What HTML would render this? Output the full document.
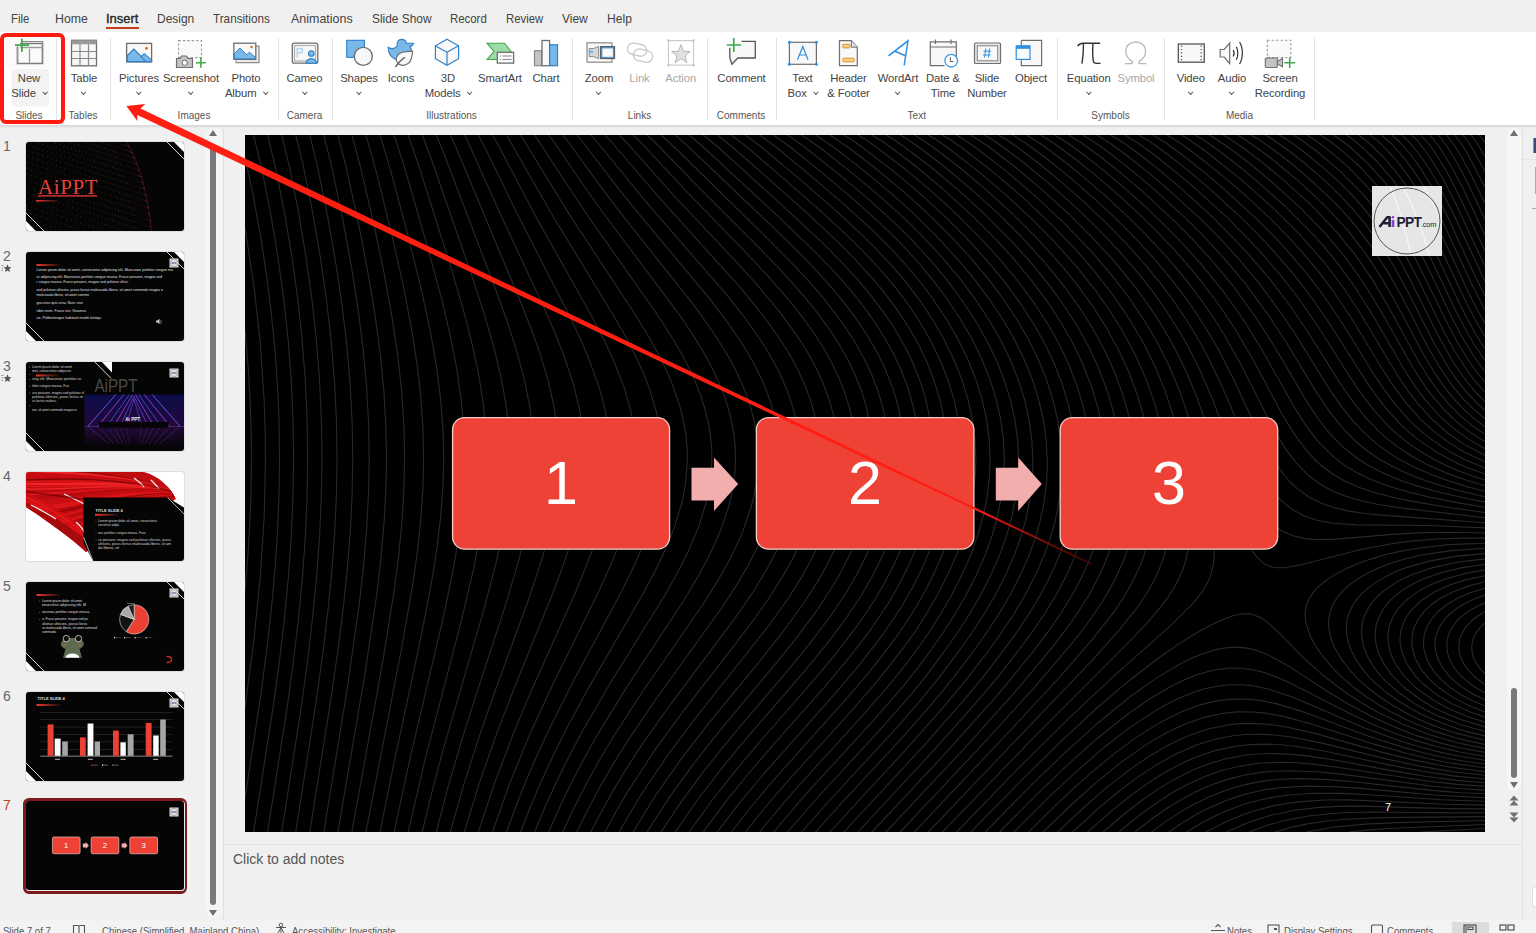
<!DOCTYPE html>
<html><head><meta charset="utf-8">
<style>
*{margin:0;padding:0;box-sizing:border-box}
html,body{width:1536px;height:933px;overflow:hidden;background:#f0f0f0;font-family:"Liberation Sans",sans-serif;color:#424242}
.a{position:absolute}
.tab{position:absolute;top:12px;transform-origin:0 0;font-size:12.6px;color:#424242;white-space:nowrap}
.lbl{position:absolute;font-size:11.3px;color:#444;text-align:center;white-space:nowrap;line-height:15px;transform:translateX(-50%);letter-spacing:-0.1px}
.grp{position:absolute;top:109px;font-size:10px;color:#555;white-space:nowrap;transform:translateX(-50%);line-height:13px}
.sep{position:absolute;top:38px;width:1px;height:82px;background:#e3e3e3}
.dis{color:#a8a8a8}
.chev{display:inline-block;width:3.6px;height:3.6px;border-right:1px solid #555;border-bottom:1px solid #555;transform:rotate(45deg);margin:0 0 4px 4px;vertical-align:middle}
.lbl .c0{margin-left:0}
.num{position:absolute;left:3px;font-size:14px;color:#666;line-height:14px}
.thumb{position:absolute;left:25px;width:159px;height:89px;background:#000;overflow:hidden;border-radius:3px}
</style></head>
<body>

<div class="a" style="left:0;top:0;width:1536px;height:32px;background:#f0f0f0"></div>
<div class="tab" style="left:11px;transform:scaleX(0.9)">File</div>
<div class="tab" style="left:55px;transform:scaleX(0.98)">Home</div>
<div class="tab" style="left:106px;color:#262626;-webkit-text-stroke:0.35px #262626;transform:scaleX(1.03)">Insert</div>
<div class="a" style="left:106px;top:27px;width:33px;height:2px;background:#c43e1c"></div>
<div class="tab" style="left:157px;transform:scaleX(0.95)">Design</div>
<div class="tab" style="left:213px;transform:scaleX(0.93)">Transitions</div>
<div class="tab" style="left:291px;transform:scaleX(0.99)">Animations</div>
<div class="tab" style="left:372px;transform:scaleX(0.945)">Slide Show</div>
<div class="tab" style="left:450px;transform:scaleX(0.905)">Record</div>
<div class="tab" style="left:506px;transform:scaleX(0.9)">Review</div>
<div class="tab" style="left:562px;transform:scaleX(0.95)">View</div>
<div class="tab" style="left:607px;transform:scaleX(0.965)">Help</div>
<div class="a" style="left:0;top:32px;width:1536px;height:93px;background:#fff"></div>
<div class="a" style="left:0;top:125px;width:1536px;height:3px;background:linear-gradient(#d4d4d4,#ececec)"></div>

<svg class="a" style="left:0;top:0" width="1536" height="130" viewBox="0 0 1536 130">
<g fill="none" stroke-linejoin="miter">
<!-- New Slide -->
<rect x="5" y="35" width="46" height="33" fill="#fbfbfb"/>
<rect x="11.5" y="69" width="37.5" height="37.5" rx="3" fill="#f3f3f3"/>
<path d="M20 43.5h22.5v20h-25v-17" stroke="#7a7a7a" stroke-width="1.6"/>
<path d="M17.5 47.5v16M20 47.5h22.5M29.5 49v14.5" stroke="#9a9a9a" stroke-width="1.3"/>
<path d="M22 42.5h20.5v21" stroke="#8a8a8a" stroke-width="1.2" transform="translate(0,-1)"/>
<path d="M15 45.2h14M21.9 38.5v13.5" stroke="#3fa84b" stroke-width="1.7"/>
<!-- Table -->
<rect x="71.5" y="40.3" width="25" height="25.5" fill="#f7f7f7" stroke="#6e6e6e" stroke-width="1.3"/>
<rect x="71.5" y="40.3" width="25" height="4" fill="#9a9a9a"/>
<path d="M71.5 51.5h25M71.5 58.5h25M80 44.3v21.5M88.5 44.3v21.5" stroke="#8a8a8a" stroke-width="1.2"/>
<!-- Pictures -->
<rect x="126.6" y="43.4" width="25" height="18.5" fill="#f8f8f8" stroke="#6e6e6e" stroke-width="1.3"/>
<path d="M127.3 55.5l6.5-6.5 7.5 7.5 3-2.8 7.3 6.5v1.4h-24.3z" fill="#7ab8e8" stroke="#2f7fc8" stroke-width="1.1"/>
<path d="M140.5 56.2l5 5" stroke="#2f7fc8" stroke-width="1.1"/>
<circle cx="146.5" cy="48.3" r="1.5" fill="#e8731a"/>
<!-- Screenshot -->
<rect x="178.5" y="40.6" width="23" height="17" fill="#fafafa" stroke="#9a9a9a" stroke-width="1.1" stroke-dasharray="2.4 2"/>
<path d="M176.5 58.5h3.5l1.5-2.5h5l1.5 2.5h4.5v9h-16z" fill="#c4c4c4" stroke="#6e6e6e" stroke-width="1.2"/>
<circle cx="184.7" cy="62.8" r="2.6" fill="#fff" stroke="#6e6e6e" stroke-width="1"/>
<path d="M196 62.7h9.8M200.9 57.6v10.2" stroke="#3fa84b" stroke-width="1.6"/>
<!-- Photo album -->
<path d="M236 60.5v2.2h23v-16.5h-2.8" stroke="#8a8a8a" stroke-width="1.2" fill="#eee"/>
<rect x="233.8" y="43.2" width="22" height="16.2" fill="#f8f8f8" stroke="#6e6e6e" stroke-width="1.3"/>
<path d="M234.4 53.5l5.5-5.5 6.8 6.8 2.7-2.6 6 5.3v1.3h-21z" fill="#7ab8e8" stroke="#2f7fc8" stroke-width="1"/>
<circle cx="251.5" cy="47" r="1.3" fill="#e8731a"/>
<!-- Cameo -->
<rect x="292.3" y="43.2" width="25.5" height="20" rx="2" fill="#f8f8f8" stroke="#6e6e6e" stroke-width="1.3"/>
<rect x="294.5" y="45.5" width="21" height="15.5" fill="none" stroke="#b0b0b0" stroke-width="1.2"/>
<path d="M297.2 57.5v-9h3a2.2 2.2 0 0 1 0 4.4h-3" stroke="#a9d0f2" stroke-width="1.3"/>
<circle cx="311.3" cy="53.5" r="2.8" fill="#7ab8e8" stroke="#2f7fc8" stroke-width="1.1"/>
<path d="M306 63.3a5.3 4.7 0 0 1 10.6 0z" fill="#7ab8e8" stroke="#2f7fc8" stroke-width="1.1"/>
<!-- Shapes -->
<rect x="346.7" y="40.3" width="17.7" height="17" fill="#7ab8e8" stroke="#2f7fc8" stroke-width="1.1"/>
<circle cx="363.3" cy="56.4" r="9" fill="#f8f8f8" stroke="#6e6e6e" stroke-width="1.3"/>
<!-- Icons (duck + leaf) -->
<path d="M388.2 47.2c3 2 6.5 1.5 9-1-1-4 1.3-6.8 4.5-6.8 2.5 0 4.2 1.8 4.7 3.8h7.3c-.5 1.7-2 3-3.7 3.4 1 1.6 1.5 3.3 1.3 5-.5 5-5 8-10.5 8.3-8 .3-12.5-5-12.6-12.7z" fill="#7ab8e8" stroke="#2f7fc8" stroke-width="1.1"/>
<path d="M395.5 66.8c2-3 4.5-6 8.5-9.2M398 63.5c-3-3-2.3-8 2-10.3 3.5-1.8 8-1.6 12.5-2-.2 5-1.2 9.5-4 12-2.5 2.5-7 3-10.5.3z" fill="#f8f8f8" stroke="#6e6e6e" stroke-width="1.2"/>
<path d="M395.5 66.8c2-3 4.5-6 9.5-9.5" stroke="#6e6e6e" stroke-width="1.2"/>
<!-- 3D models cube -->
<path d="M447 39.2l11.6 6.6v12.9l-11.6 6.6-11.6-6.6v-12.9z" fill="#f8f8f8" stroke="#2f7fc8" stroke-width="1.2"/>
<path d="M435.4 45.8l6.5 3.7M447 52.2l11.6-6.4M447 52.2v13" stroke="#2f7fc8" stroke-width="1.2"/>
<path d="M441.9 49.5l5.1 2.7" stroke="#2f7fc8" stroke-width="1.2" stroke-dasharray="0"/>
<!-- SmartArt -->
<path d="M487 43.2h17.5l7.5 9.5-7.5 6.8h-17.5l7-8z" fill="#9fdba6" stroke="#3fa84b" stroke-width="1.1"/>
<rect x="497.3" y="52.3" width="16.3" height="10.8" fill="#fafafa" stroke="#6e6e6e" stroke-width="1.3"/>
<path d="M500 56h1M502.5 56h9M500 59.5h1M502.5 59.5h9" stroke="#8a8a8a" stroke-width="1"/>
<!-- Chart -->
<rect x="534.5" y="50.7" width="7.3" height="15" fill="#c4c4c4" stroke="#8a8a8a" stroke-width="1.2"/>
<rect x="542" y="40.5" width="7.6" height="25.2" fill="#fafafa" stroke="#6e6e6e" stroke-width="1.3"/>
<rect x="549.7" y="44.8" width="7.8" height="20.9" fill="#7ab8e8" stroke="#2f7fc8" stroke-width="1.2"/>
<!-- Zoom -->
<rect x="587" y="42.8" width="25" height="19.4" fill="#f7f7f7" stroke="#8a8a8a" stroke-width="1.2"/>
<path d="M589.2 48.5h4.5l5-2.2h0v12.5l-5-2.2h-4.5z" fill="#d8d8d8" stroke="#8a8a8a" stroke-width="1"/>
<rect x="590" y="50.5" width="3" height="2.5" fill="#7ab8e8"/>
<rect x="600.6" y="46.6" width="14" height="12" fill="#555" stroke="#555" stroke-width="1"/>
<rect x="601.8" y="47.8" width="11.6" height="9.6" fill="#fafafa" stroke="#4a9be0" stroke-width="1.2"/>
<!-- Link (disabled) -->
<rect x="627.3" y="43.8" width="19.5" height="11.6" rx="5.8" stroke="#c8c8c8" stroke-width="1.3" transform="rotate(12 637 49.6)"/>
<rect x="633.3" y="49.9" width="19.5" height="11.6" rx="5.8" stroke="#c8c8c8" stroke-width="1.3" transform="rotate(12 643 55.7)"/>
<!-- Action (disabled) -->
<rect x="668.5" y="40.6" width="25" height="24.5" stroke="#c8c8c8" stroke-width="1.1"/>
<rect x="667.3" y="39.4" width="2.4" height="2.4" fill="#c8c8c8"/><rect x="692.3" y="39.4" width="2.4" height="2.4" fill="#c8c8c8"/>
<rect x="667.3" y="63.9" width="2.4" height="2.4" fill="#c8c8c8"/><rect x="692.3" y="63.9" width="2.4" height="2.4" fill="#c8c8c8"/>
<path d="M681 44.7l2.6 6.6 6.7.3-5.3 4.4 1.9 6.6-5.9-3.9-5.9 3.9 1.9-6.6-5.3-4.4 6.7-.3z" fill="#e0e0e0" stroke="#b8b8b8" stroke-width="1"/>
<!-- Comment -->
<path d="M741.5 41.3H755.3V58H737.8L731.9 64.2L729.8 58V47.8" fill="#f8f8f8" stroke="#555" stroke-width="1.3" stroke-linejoin="miter"/>
<path d="M726.8 45h14.2M733.8 38v14" stroke="#3fa84b" stroke-width="1.7"/>
<!-- Text box -->
<rect x="789.4" y="42.3" width="27" height="22" fill="#f8f8f8" stroke="#6e6e6e" stroke-width="1.2"/>
<circle cx="789.4" cy="42.3" r="1.5" fill="#2f8fe0"/><circle cx="816.4" cy="42.3" r="1.5" fill="#2f8fe0"/>
<circle cx="789.4" cy="64.3" r="1.5" fill="#2f8fe0"/><circle cx="816.4" cy="64.3" r="1.5" fill="#2f8fe0"/>
<path d="M797.5 59.8l5.3-13.3 5.2 13.3M799.4 55h7" stroke="#2f8fe0" stroke-width="1.2"/>
<!-- Header & Footer -->
<path d="M839.5 40.7h11.8l6 6.5v18.5h-17.8z" fill="#f8f8f8" stroke="#6e6e6e" stroke-width="1.2"/>
<path d="M851.3 40.7v6.5h6" fill="#e0e0e0" stroke="#6e6e6e" stroke-width="1"/>
<rect x="842.7" y="44.3" width="7.2" height="3.6" rx="1" fill="#f7d48a" stroke="#e8892a" stroke-width="1"/>
<rect x="842.7" y="58.2" width="11.5" height="3.6" rx="1" fill="#f7d48a" stroke="#e8892a" stroke-width="1"/>
<!-- WordArt -->
<path d="M888.5 55.8l19.5-15-3.8 24.5M895 51.2l10.5 4.6" stroke="#2f8fe0" stroke-width="1.5"/>
<!-- Date & Time -->
<path d="M944.5 65.6h-14.2v-23.8h26v18" fill="#f8f8f8" stroke="#6e6e6e" stroke-width="1.2"/>
<path d="M930.3 47h26M935.5 39.5v4.5M951 39.5v4.5" stroke="#6e6e6e" stroke-width="1.2"/>
<circle cx="951.2" cy="60.7" r="6.3" fill="#fff" stroke="#3a9ae0" stroke-width="1.3"/>
<path d="M950.3 57.2v4.3h3" stroke="#555" stroke-width="1"/>
<!-- Slide number -->
<rect x="974.5" y="43" width="26" height="20.5" rx="1" fill="#e8e8e8" stroke="#6e6e6e" stroke-width="1.2"/>
<rect x="977.3" y="45.8" width="20.4" height="15" fill="#f8f8f8" stroke="#8a8a8a" stroke-width="1.1"/>
<path d="M985.8 48.5l-1.2 9M989.6 48.5l-1.2 9M983.5 51.2h7.5M983 55h7.5" stroke="#2f8fe0" stroke-width="1"/>
<!-- Object -->
<path d="M1021.3 40.3h20.3v25.3h-20.3v-6" fill="#f8f8f8" stroke="#6e6e6e" stroke-width="1.2"/>
<path d="M1021.3 40.3v5.5" stroke="#6e6e6e" stroke-width="1.2"/>
<rect x="1016.2" y="45.8" width="13.8" height="13.6" fill="#fafafa" stroke="#2f8fe0" stroke-width="1.2"/>
<rect x="1016.2" y="45.8" width="13.8" height="3" fill="#2f8fe0"/>
<!-- Equation pi -->
<path d="M1077.5 46c1.5-2 3-2.8 5.5-2.8h17.2M1083.5 43.2c0 7-.5 14-1.5 20.5M1093 43.2c-.5 6-.5 13 .5 18.5.5 1.5 2.5 2 7 1.5" stroke="#333" stroke-width="1.4"/>
<!-- Symbol omega (disabled) -->
<path d="M1125 63.7h7.3v-2.3c-4.2-2.2-6.5-6-6.5-10.3 0-5.3 4.3-9.1 9.9-9.1s9.9 3.8 9.9 9.1c0 4.3-2.3 8.1-6.5 10.3v2.3h7.3" stroke="#b8b8b8" stroke-width="1.3"/>
<!-- Video -->
<rect x="1178.3" y="44" width="26" height="18.2" fill="#f8f8f8" stroke="#555" stroke-width="1.3"/>
<path d="M1181.5 45.5v16M1201.2 45.5v16" stroke="#555" stroke-width="1.3" stroke-dasharray="1.2 2.2"/>
<!-- Audio -->
<path d="M1220.2 49.5h4l5.5-6.5v20.5l-5.5-6.5h-4z" fill="#f8f8f8" stroke="#6e6e6e" stroke-width="1.2"/>
<path d="M1233.2 50c1.2 2 1.2 4.5 0 6.5M1236.3 46.8c2 3.5 2 9.5 0 13M1239.5 42c3.8 5.5 3.8 16.5 0 22" stroke="#333" stroke-width="1.2"/>
<!-- Screen recording -->
<rect x="1267.3" y="40.2" width="23.5" height="17.3" fill="#fafafa" stroke="#9a9a9a" stroke-width="1.1" stroke-dasharray="2.4 2"/>
<rect x="1265.3" y="58" width="12" height="9.5" rx="1" fill="#c4c4c4" stroke="#6e6e6e" stroke-width="1.1"/>
<path d="M1277.5 61.3l5-2.8v8.2l-5-2.8z" fill="#c4c4c4" stroke="#6e6e6e" stroke-width="1.1"/>
<path d="M1284.3 62.7h10.8M1289.7 57.5v10.5" stroke="#3fa84b" stroke-width="1.6"/>
</g>
</svg>

<div class="lbl" style="left:29px;top:71px">New<br>Slide <span class="chev"></span></div>
<div class="lbl" style="left:84px;top:71px">Table<br><span class="chev c0"></span></div>
<div class="lbl" style="left:139px;top:71px">Pictures<br><span class="chev c0"></span></div>
<div class="lbl" style="left:191px;top:71px">Screenshot<br><span class="chev c0"></span></div>
<div class="lbl" style="left:246px;top:71px">Photo<br>Album <span class="chev"></span></div>
<div class="lbl" style="left:304.5px;top:71px">Cameo<br><span class="chev c0"></span></div>
<div class="lbl" style="left:359px;top:71px">Shapes<br><span class="chev c0"></span></div>
<div class="lbl" style="left:401px;top:71px">Icons</div>
<div class="lbl" style="left:448px;top:71px">3D<br>Models <span class="chev"></span></div>
<div class="lbl" style="left:500px;top:71px">SmartArt</div>
<div class="lbl" style="left:546px;top:71px">Chart</div>
<div class="lbl" style="left:599px;top:71px">Zoom<br><span class="chev c0"></span></div>
<div class="lbl dis" style="left:639.5px;top:71px">Link</div>
<div class="lbl dis" style="left:680.75px;top:71px">Action</div>
<div class="lbl" style="left:741.5px;top:71px">Comment</div>
<div class="lbl" style="left:802.5px;top:71px">Text<br>Box <span class="chev"></span></div>
<div class="lbl" style="left:848.5px;top:71px">Header<br>&amp; Footer</div>
<div class="lbl" style="left:898px;top:71px">WordArt<br><span class="chev c0"></span></div>
<div class="lbl" style="left:943px;top:71px">Date &amp;<br>Time</div>
<div class="lbl" style="left:987px;top:71px">Slide<br>Number</div>
<div class="lbl" style="left:1031px;top:71px">Object</div>
<div class="lbl" style="left:1088.75px;top:71px">Equation<br><span class="chev c0"></span></div>
<div class="lbl dis" style="left:1136px;top:71px">Symbol</div>
<div class="lbl" style="left:1190.75px;top:71px">Video<br><span class="chev c0"></span></div>
<div class="lbl" style="left:1232px;top:71px">Audio<br><span class="chev c0"></span></div>
<div class="lbl" style="left:1280px;top:71px">Screen<br>Recording</div>
<div class="grp" style="left:29px">Slides</div>
<div class="grp" style="left:83px">Tables</div>
<div class="grp" style="left:194px">Images</div>
<div class="grp" style="left:304.5px">Camera</div>
<div class="grp" style="left:451.5px">Illustrations</div>
<div class="grp" style="left:639.5px">Links</div>
<div class="grp" style="left:741px">Comments</div>
<div class="grp" style="left:916.75px">Text</div>
<div class="grp" style="left:1110.5px">Symbols</div>
<div class="grp" style="left:1239.5px">Media</div>
<div class="sep" style="left:56px"></div>
<div class="sep" style="left:110px"></div>
<div class="sep" style="left:278px"></div>
<div class="sep" style="left:332px"></div>
<div class="sep" style="left:572px"></div>
<div class="sep" style="left:707px"></div>
<div class="sep" style="left:776px"></div>
<div class="sep" style="left:1057px"></div>
<div class="sep" style="left:1164px"></div>
<div class="sep" style="left:1314px"></div>
<!-- thumbnail pane scrollbar -->
<div class="a" style="left:205px;top:128px;width:18px;height:790px;background:#f5f5f5;border-radius:9px"></div>
<div class="a" style="left:223px;top:128px;width:1px;height:792px;background:#e0e0e0"></div>
<div class="a" style="left:210px;top:147px;width:6px;height:758px;background:#7a7a7a;border-radius:3px"></div>
<div class="a" style="left:209px;top:130px;width:0;height:0;border-left:4px solid transparent;border-right:4px solid transparent;border-bottom:6px solid #707070"></div>
<div class="a" style="left:209px;top:910px;width:0;height:0;border-left:4px solid transparent;border-right:4px solid transparent;border-top:6px solid #707070"></div>
<!-- slide numbers -->
<div class="num" style="top:139px">1</div>
<div class="num" style="top:249px">2</div>
<div class="num" style="top:359px">3</div>
<div class="num" style="top:469px">4</div>
<div class="num" style="top:579px">5</div>
<div class="num" style="top:689px">6</div>
<div class="num" style="top:798px;color:#c43e1c">7</div>
<!-- main slide -->
<div class="a" id="slide" style="left:245px;top:135px;width:1240px;height:697px;background:#000;overflow:hidden"></div>
<div class="a" style="left:245px;top:135px;width:1240px;height:697px;overflow:hidden">
<svg width="1240" height="697" viewBox="0 0 1240 697" style="position:absolute;left:0;top:0">
<g id="contours" fill="none" stroke="#282828" stroke-width="1.1"><path d="M0.0 456.1 2.9 420.6 4.8 388.6 6.0 356.5 6.4 324.5 6.1 292.4 4.9 260.4 2.9 228.3 0.0 194.7 M0.0 572.4 8.9 504.7 15.4 440.6 19.2 380.5 20.5 324.5 20.1 292.4 19.1 264.4 15.3 208.3 9.1 152.2 0.0 92.5 M0.0 663.2 16.3 556.8 22.0 512.7 26.5 472.7 30.1 432.6 32.5 396.6 34.0 360.5 34.5 324.5 34.1 288.4 32.6 252.4 30.1 216.3 26.1 176.3 21.5 140.2 15.4 100.1 8.1 60.1 0.0 21.6 M8.6 697.0 28.0 572.8 34.1 528.8 39.3 484.7 43.5 440.6 46.3 400.6 48.0 360.5 48.6 324.5 48.0 284.4 46.2 244.4 43.1 204.3 38.8 164.2 32.6 120.2 25.2 76.1 16.4 32.0 8.6 0.0 M22.6 697.0 42.1 572.8 48.1 528.8 53.4 484.7 57.6 440.6 60.4 400.6 62.1 360.5 62.6 324.5 62.1 284.4 60.2 244.4 57.1 204.3 52.8 164.2 46.7 120.2 39.2 76.1 30.4 32.0 22.6 0.0 M36.7 697.0 56.2 572.8 62.2 528.8 67.4 484.7 71.7 440.6 74.6 400.6 76.4 360.5 77.0 324.5 76.4 284.4 74.5 244.4 71.3 204.3 66.9 164.2 60.7 120.2 53.3 76.1 44.5 32.0 36.7 0.0 M50.7 697.0 70.8 568.8 77.5 520.7 82.8 476.7 86.8 436.6 89.7 396.6 91.4 360.5 92.0 324.5 91.4 284.4 89.6 248.4 86.4 208.3 81.9 168.2 75.6 124.2 67.4 76.1 57.7 28.0 50.7 0.0 M64.8 697.0 86.4 560.8 93.3 512.7 98.3 472.7 102.4 432.6 105.3 396.6 107.1 360.5 107.7 324.5 107.2 288.4 105.1 248.4 102.0 212.3 97.3 172.2 90.8 128.2 82.4 80.1 72.6 32.0 64.8 0.0 M78.8 697.0 102.4 552.8 114.3 468.7 118.8 428.6 121.7 392.6 123.6 356.5 124.2 324.5 123.6 288.4 121.6 252.4 118.3 216.3 113.4 176.3 106.5 132.2 97.7 84.1 86.8 32.0 78.8 0.0 M92.9 697.0 119.6 540.8 131.6 460.7 135.8 424.6 139.0 388.6 140.8 356.5 141.5 324.5 140.9 292.4 138.9 256.4 135.4 220.3 130.1 180.3 122.7 136.2 113.4 88.1 101.1 32.0 92.9 0.0 M106.9 697.0 137.4 528.8 149.0 456.7 153.7 420.6 156.8 388.6 158.8 356.5 159.6 324.5 159.0 292.4 156.7 256.4 152.7 220.3 147.4 184.3 139.5 140.2 129.5 92.1 115.5 32.0 106.9 0.0 M121.0 697.0 156.7 512.7 167.9 448.6 172.4 416.6 175.8 384.6 178.0 352.5 178.6 324.5 177.9 292.4 175.7 260.4 171.9 228.3 166.3 192.3 157.7 148.2 146.9 100.1 131.1 36.1 121.0 0.0 M135.0 697.0 148.0 632.7 176.3 500.7 187.0 444.6 192.0 412.6 195.8 380.5 197.9 352.5 198.7 324.5 198.1 296.4 195.7 264.4 191.6 232.3 185.3 196.3 176.7 156.2 165.0 108.2 145.8 36.1 135.0 0.0 M149.1 697.0 165.6 620.9 197.8 484.7 207.8 436.6 213.3 404.6 216.8 376.5 219.1 348.5 219.7 324.5 219.0 296.4 216.2 264.4 211.5 232.3 205.2 200.3 196.7 164.2 183.7 116.2 159.4 32.0 149.1 0.0 M163.2 697.0 180.0 624.8 216.6 484.7 228.9 432.6 234.3 404.6 238.5 376.5 241.0 348.5 241.8 324.5 241.0 296.4 238.3 268.4 233.1 236.3 226.0 204.3 217.6 172.2 204.6 128.2 174.2 32.0 163.2 0.0 M177.2 697.0 187.0 656.9 198.6 612.9 238.3 476.7 250.9 428.6 257.0 400.6 261.6 372.5 264.0 348.5 265.0 324.5 264.3 300.4 261.4 272.4 256.5 244.4 248.9 212.3 239.6 180.3 226.6 140.2 186.3 24.0 177.2 0.0 M191.3 697.0 202.8 652.9 216.0 607.7 229.5 564.8 261.0 468.7 274.0 424.6 280.7 396.6 285.1 372.5 288.0 348.5 289.0 324.5 288.2 300.4 284.9 272.4 279.3 244.4 270.6 212.3 261.4 184.3 249.8 152.2 197.9 16.0 191.3 0.0 M205.3 697.0 219.0 648.9 234.4 600.9 249.8 556.8 283.5 464.7 298.0 420.6 305.4 392.6 310.1 368.5 313.1 344.5 313.9 324.5 313.0 300.4 309.2 272.4 302.8 244.4 294.3 216.3 285.6 192.3 274.5 164.2 210.8 12.0 205.3 0.0 M219.4 697.0 234.1 648.9 252.0 597.6 269.3 552.8 306.8 460.7 315.9 436.6 322.8 416.6 329.8 392.6 335.2 368.5 338.5 344.5 339.5 324.5 338.4 300.4 335.0 276.4 328.2 248.4 318.8 220.3 309.3 196.3 298.8 172.2 256.0 80.5 225.3 12.0 219.4 0.0 M233.4 697.0 249.3 648.9 269.0 596.9 288.0 551.9 330.8 456.7 346.8 416.6 354.7 392.6 360.6 368.5 364.3 344.5 365.4 324.5 364.2 300.4 360.4 276.4 357.5 264.4 352.8 248.4 342.4 220.3 333.7 200.3 322.2 176.3 272.0 78.4 239.7 12.0 233.4 0.0 M247.5 697.0 264.5 648.9 285.8 596.9 308.0 548.9 353.6 456.7 364.5 432.6 372.7 412.6 380.9 388.6 386.2 368.5 390.2 344.5 391.4 324.5 391.1 312.4 390.1 300.4 388.4 288.4 385.9 276.4 379.1 252.4 368.1 224.3 358.7 204.3 346.2 180.3 292.0 83.7 252.1 8.0 247.5 0.0 M261.5 697.0 271.8 669.0 281.4 644.9 292.0 620.3 304.0 594.4 328.0 546.7 376.4 456.7 386.4 436.6 395.4 416.6 404.6 392.6 411.6 368.5 414.1 356.5 415.8 344.5 417.1 324.5 416.8 312.4 415.8 300.4 413.9 288.4 411.3 276.4 404.0 252.4 399.3 240.3 392.1 224.3 382.0 204.3 370.8 184.3 308.0 81.2 261.5 0.0 M275.6 697.0 284.9 673.0 296.0 646.9 308.0 620.9 320.0 596.6 344.0 552.1 399.2 456.7 409.9 436.6 419.5 416.6 429.3 392.6 436.6 368.5 439.2 356.5 441.0 344.5 442.4 324.5 442.1 312.4 441.0 300.4 439.0 288.4 435.2 272.4 427.0 248.4 421.8 236.3 414.0 220.3 402.9 200.3 390.7 180.3 324.0 78.9 275.6 0.0 M289.6 697.0 299.6 673.0 310.5 648.9 322.2 624.9 336.0 598.7 364.0 550.3 419.5 460.7 433.1 436.6 443.2 416.6 453.3 392.6 460.9 368.5 463.6 356.5 465.5 344.5 466.9 324.5 466.6 312.4 465.4 300.4 463.5 288.4 459.5 272.4 455.6 260.4 451.0 248.4 445.6 236.3 437.4 220.3 425.7 200.3 412.8 180.3 340.0 76.8 289.6 0.0 M303.7 697.0 314.3 673.0 325.8 648.9 338.4 624.9 352.0 600.6 380.0 554.9 439.3 464.7 453.6 440.6 464.3 420.6 475.2 396.6 483.4 372.5 486.4 360.5 488.6 348.5 490.0 336.5 490.5 324.5 490.2 312.4 489.0 300.4 487.0 288.4 483.0 272.4 479.1 260.4 472.5 244.4 466.8 232.3 458.0 216.3 445.6 196.3 431.9 176.3 356.0 75.0 336.0 46.8 309.7 8.0 303.7 0.0 M317.7 697.0 329.0 673.0 341.3 648.9 354.5 624.9 368.0 602.3 396.0 559.0 458.4 468.7 473.4 444.6 484.7 424.6 492.5 408.6 497.7 396.6 506.0 372.5 509.0 360.5 511.2 348.5 512.6 336.5 513.1 324.5 512.8 312.4 511.7 300.4 508.8 284.4 505.6 272.4 500.1 256.4 495.0 244.4 489.2 232.3 480.3 216.3 467.5 196.3 450.3 172.2 372.0 73.3 352.0 46.7 324.1 8.0 317.7 0.0 M331.8 697.0 343.7 673.0 356.0 650.1 368.3 628.9 383.3 604.9 412.0 562.7 476.8 472.7 492.5 448.6 504.1 428.6 512.3 412.6 517.7 400.6 526.5 376.5 530.6 360.5 532.8 348.5 534.2 336.5 534.7 324.5 534.1 308.4 532.7 296.4 530.4 284.4 526.0 268.4 520.2 252.4 514.8 240.3 508.7 228.3 499.4 212.3 483.2 188.3 465.0 164.2 388.0 71.7 368.0 46.6 338.5 8.0 331.8 0.0 M345.8 697.0 358.4 673.0 369.7 652.9 381.9 632.9 396.0 611.1 424.0 571.3 491.8 480.7 508.2 456.7 522.7 432.6 531.2 416.6 536.8 404.6 543.2 388.6 547.2 376.5 551.3 360.5 553.4 348.5 554.8 336.5 555.3 324.5 554.7 308.4 553.3 296.4 551.1 284.4 546.7 268.4 542.5 256.4 535.6 240.3 527.3 224.3 517.7 208.3 501.0 184.3 482.0 160.2 400.0 65.7 353.0 8.0 345.8 0.0 M359.9 697.0 370.8 677.0 382.6 656.9 408.6 616.9 437.7 576.8 490.7 508.7 508.8 484.7 525.6 460.7 540.5 436.6 548.0 422.9 555.0 408.6 560.0 396.6 565.7 380.5 569.1 368.5 572.4 352.5 574.3 336.5 574.8 324.5 574.3 308.4 572.3 292.4 568.8 276.4 565.2 264.4 560.0 250.4 553.6 236.3 545.1 220.3 535.1 204.3 517.9 180.3 495.0 152.2 416.0 64.7 367.4 8.0 359.9 0.0 M374.0 697.0 396.0 659.7 422.2 620.9 452.0 581.2 522.2 492.7 542.3 464.7 557.5 440.6 566.4 424.6 574.1 408.6 580.0 394.0 584.6 380.5 588.0 367.9 591.1 352.5 592.6 340.5 593.5 324.5 592.9 308.4 590.9 292.4 588.0 278.2 584.0 264.2 578.1 248.4 570.8 232.3 562.0 216.3 551.8 200.3 534.2 176.3 510.7 148.2 488.8 124.2 428.0 59.6 381.8 8.0 374.0 0.0 M388.0 697.0 410.3 660.9 435.5 624.9 464.0 587.9 515.8 524.8 538.0 496.7 558.4 468.7 573.8 444.6 582.7 428.6 590.6 412.6 596.0 399.6 601.3 384.6 605.7 368.5 608.9 352.5 610.7 336.5 611.2 324.5 610.6 308.4 608.7 292.4 605.4 276.4 600.7 260.4 594.6 244.4 587.0 228.3 578.1 212.3 567.7 196.3 559.1 184.3 546.6 168.2 522.2 140.2 499.6 116.2 440.0 54.9 396.3 8.0 388.0 0.0 M402.1 697.0 424.0 662.9 448.0 629.6 476.0 594.1 530.6 528.8 550.0 504.7 571.0 476.7 588.0 450.8 596.2 436.6 604.4 420.6 611.5 404.6 617.3 388.6 621.9 372.5 625.2 356.5 627.3 340.5 628.1 324.5 627.2 304.4 625.0 288.4 621.5 272.4 616.6 256.4 610.3 240.3 602.6 224.3 593.5 208.3 583.0 192.3 572.0 177.3 561.5 164.2 533.0 132.2 509.6 108.2 452.0 50.6 410.7 8.0 402.1 0.0 M416.1 697.0 436.0 667.1 460.0 634.6 488.0 599.8 541.7 536.8 564.0 509.6 585.8 480.7 601.8 456.7 612.0 439.1 621.3 420.6 628.2 404.6 633.8 388.6 638.2 372.5 641.4 356.5 643.4 340.5 644.2 324.5 643.3 304.4 641.2 288.4 637.8 272.4 633.1 256.4 627.0 240.3 619.5 224.3 608.2 204.3 597.6 188.3 588.0 175.3 575.9 160.2 561.9 144.2 546.9 128.2 523.1 104.1 429.2 12.0 416.1 0.0 M430.2 697.0 452.4 665.0 480.0 629.2 504.0 600.4 559.0 536.8 582.0 508.7 600.0 484.7 616.1 460.7 627.7 440.6 635.7 424.6 642.6 408.6 648.4 392.6 652.9 376.5 656.3 360.5 658.8 340.5 659.5 324.5 658.7 304.4 656.7 288.4 652.4 268.4 647.5 252.4 640.0 233.5 632.0 217.1 622.2 200.3 611.6 184.3 599.5 168.2 586.2 152.2 571.8 136.2 556.4 120.2 532.0 96.1 443.8 12.0 430.2 0.0 M444.2 697.0 467.3 665.0 492.0 633.8 516.0 605.4 569.1 544.8 592.5 516.7 613.8 488.7 629.8 464.7 640.0 447.3 649.5 428.6 656.5 412.6 663.6 392.6 668.0 376.3 671.8 356.5 673.6 340.5 674.3 324.5 673.5 304.4 671.5 288.4 668.0 270.9 662.7 252.4 656.0 234.8 647.3 216.3 636.0 196.7 625.0 180.3 612.9 164.2 599.5 148.2 584.9 132.2 569.3 116.2 527.4 76.1 458.3 12.0 444.2 0.0 M458.3 697.0 480.0 667.7 504.0 638.0 528.0 610.1 578.8 552.8 604.0 522.9 624.1 496.7 643.1 468.7 652.5 452.6 662.8 432.6 671.4 412.6 676.9 396.6 681.4 380.5 685.5 360.5 687.8 340.5 688.5 324.5 687.7 304.4 685.1 284.4 680.7 264.4 675.9 248.4 668.0 228.3 660.3 212.3 648.7 192.3 637.9 176.3 625.7 160.2 612.3 144.2 597.6 128.2 577.8 108.2 526.1 60.1 472.9 12.0 458.3 0.0 M472.3 697.0 492.0 671.1 516.0 642.0 588.1 560.8 615.3 528.8 637.0 500.7 655.9 472.7 667.5 452.6 676.0 435.8 684.2 416.6 691.2 396.6 696.5 376.5 699.6 360.5 702.0 340.5 702.6 324.5 701.8 304.4 699.2 284.4 694.8 264.4 690.0 248.4 682.4 228.3 674.9 212.3 663.7 192.3 652.0 174.6 638.2 156.2 624.6 140.2 609.9 124.2 589.9 104.1 564.2 80.1 532.9 52.1 487.4 12.0 472.3 0.0 M486.4 697.0 505.2 673.0 528.0 645.7 600.0 565.4 624.5 536.8 649.4 504.7 668.3 476.7 679.9 456.7 689.9 436.6 698.4 416.6 704.1 400.6 709.8 380.5 713.8 360.5 716.1 340.5 716.7 324.5 715.9 304.4 713.3 284.4 708.9 264.4 704.1 248.4 696.4 228.3 687.0 208.3 675.7 188.3 664.0 170.5 650.1 152.2 636.6 136.2 621.8 120.2 601.7 100.1 575.7 76.1 543.9 48.1 501.9 12.0 486.4 0.0 M500.4 697.0 519.7 673.0 540.0 649.2 609.1 572.8 633.3 544.8 658.6 512.7 670.0 496.7 680.3 480.7 692.0 460.7 702.3 440.6 711.1 420.6 718.4 400.6 724.1 380.5 728.0 360.5 730.3 340.5 730.9 324.5 730.0 304.4 727.4 284.4 723.0 264.4 716.8 244.4 708.7 224.3 698.9 204.3 687.4 184.3 676.0 167.1 661.8 148.2 648.2 132.2 632.0 114.8 613.1 96.1 586.9 72.1 554.6 44.1 516.4 12.0 500.4 0.0 M514.5 697.0 548.1 656.9 617.3 580.8 645.2 548.8 660.0 530.5 672.0 514.5 684.4 496.7 694.6 480.7 706.3 460.7 716.6 440.6 725.5 420.6 732.7 400.6 738.4 380.5 742.3 360.5 744.6 340.5 745.1 324.5 744.2 304.4 741.5 284.4 737.1 264.4 730.8 244.4 722.8 224.3 713.0 204.3 701.4 184.3 688.1 164.2 676.0 148.0 659.4 128.2 644.0 111.6 624.2 92.1 597.7 68.1 565.0 40.1 530.9 12.0 514.5 0.0 M528.6 697.0 560.0 660.2 628.9 584.8 656.8 552.8 672.0 533.9 684.8 516.7 698.7 496.7 709.0 480.7 720.7 460.7 731.1 440.6 739.9 420.6 747.1 400.6 752.7 380.5 756.6 360.5 758.8 340.5 759.3 324.5 758.4 304.4 755.7 284.4 751.2 264.4 744.9 244.4 736.9 224.3 727.1 204.3 715.5 184.3 702.2 164.2 687.1 144.2 672.0 126.0 655.4 108.2 636.0 89.1 612.9 68.1 580.0 40.1 545.3 12.0 528.5 0.0 M1240.0 488.0 1235.0 492.7 1231.8 496.7 1229.5 500.7 1227.8 504.7 1226.6 512.7 1227.8 520.7 1229.3 524.8 1234.3 532.8 1240.0 538.8 M542.6 697.0 570.4 665.0 636.7 592.9 664.8 560.8 681.1 540.8 696.2 520.7 710.4 500.7 723.5 480.7 735.2 460.7 745.6 440.6 754.4 420.6 761.7 400.6 767.2 380.5 771.0 360.5 773.2 340.5 773.6 324.5 772.6 304.4 769.8 284.4 765.3 264.4 759.0 244.4 751.0 224.3 741.1 204.3 729.5 184.3 716.2 164.2 701.2 144.2 684.5 124.2 668.0 106.2 649.8 88.1 623.4 64.1 594.9 40.1 559.7 12.0 542.6 0.0 M1240.0 476.7 1233.3 480.7 1227.9 484.7 1220.3 492.7 1215.9 500.7 1214.6 504.7 1213.8 512.7 1215.2 520.7 1216.7 524.8 1221.3 532.8 1228.4 540.8 1240.0 549.6 M556.7 697.0 585.0 665.0 651.5 592.9 675.9 564.8 695.4 540.8 710.6 520.7 724.9 500.7 738.0 480.7 749.9 460.7 760.3 440.6 769.1 420.6 775.0 404.6 780.8 384.6 784.9 364.5 787.0 348.5 787.9 328.5 786.8 304.4 784.0 284.4 779.5 264.4 773.1 244.4 765.0 224.3 755.2 204.3 743.6 184.3 730.3 164.2 715.3 144.2 698.6 124.2 680.3 104.1 660.2 84.1 633.5 60.1 604.7 36.1 574.1 12.0 556.6 0.0 M1240.0 467.8 1232.0 471.4 1224.0 475.9 1217.5 480.7 1213.1 484.7 1208.0 491.0 1204.7 496.7 1203.2 500.7 1201.7 508.7 1202.3 516.7 1204.7 524.8 1208.0 530.8 1212.2 536.8 1220.0 544.7 1225.1 548.8 1231.0 552.8 1240.0 557.9 M570.7 697.0 596.0 668.7 658.9 600.9 686.9 568.8 706.6 544.8 725.1 520.7 739.5 500.7 752.8 480.7 764.7 460.7 775.1 440.6 784.0 420.6 789.8 404.6 794.5 388.6 798.9 368.5 801.5 348.5 802.4 328.5 801.1 304.4 798.2 284.4 793.6 264.4 787.3 244.4 779.1 224.3 769.3 204.3 757.7 184.3 744.3 164.2 729.3 144.2 712.6 124.2 690.5 100.1 670.3 80.1 648.2 60.1 619.4 36.1 588.4 12.0 570.7 0.0 M1240.0 460.1 1228.0 464.5 1219.5 468.7 1212.0 473.3 1202.9 480.7 1199.3 484.7 1194.0 492.7 1191.0 500.7 1189.9 508.7 1190.7 516.7 1193.3 524.8 1197.7 532.8 1204.0 540.8 1212.0 548.3 1217.9 552.8 1228.0 559.0 1240.0 564.9 M584.8 697.0 666.1 608.9 701.2 568.8 721.1 544.8 739.8 520.7 754.3 500.7 767.7 480.7 779.7 460.7 790.2 440.6 799.0 420.6 804.8 404.6 809.5 388.6 813.7 368.5 816.1 348.5 816.9 328.5 815.5 304.4 812.5 284.4 807.8 264.4 801.4 244.4 793.2 224.3 783.4 204.3 771.7 184.3 758.4 164.2 743.4 144.2 723.2 120.2 704.6 100.1 680.2 76.1 658.0 56.1 628.9 32.0 602.7 12.0 584.8 0.0 M1240.0 453.2 1224.0 458.2 1212.0 463.5 1203.1 468.7 1192.9 476.7 1186.0 484.7 1181.5 492.7 1179.0 500.7 1178.4 508.7 1178.7 512.7 1180.5 520.7 1184.0 528.8 1189.2 536.8 1196.4 544.8 1205.7 552.8 1216.0 559.7 1225.3 564.8 1240.0 571.1 M598.9 697.0 676.0 613.8 715.6 568.8 735.7 544.8 754.6 520.7 769.3 500.7 782.9 480.7 795.0 460.7 805.6 440.6 814.4 420.6 820.1 404.6 824.6 388.6 828.7 368.5 830.6 352.5 831.5 332.5 830.7 312.4 827.6 288.4 823.1 268.4 817.0 248.4 809.1 228.3 799.6 208.3 788.3 188.3 775.3 168.2 760.6 148.2 740.8 124.2 722.5 104.1 698.5 80.1 672.3 56.1 648.3 36.1 617.0 12.0 605.5 4.0 598.8 0.0 M1240.0 446.7 1224.0 450.9 1208.2 456.7 1196.0 463.0 1187.6 468.7 1178.9 476.7 1172.9 484.7 1169.1 492.7 1167.9 496.7 1166.8 504.7 1167.3 512.7 1169.3 520.7 1170.9 524.8 1175.3 532.8 1178.1 536.8 1185.0 544.8 1193.9 552.8 1208.0 562.4 1224.0 570.7 1240.0 576.9 M612.9 697.0 687.4 616.9 733.6 564.8 753.7 540.8 769.6 520.7 784.6 500.7 798.3 480.7 810.7 460.7 819.3 444.6 826.8 428.6 834.4 408.6 839.1 392.6 843.3 372.5 845.3 356.5 846.3 336.5 845.6 316.5 842.7 292.4 838.4 272.4 832.5 252.4 823.3 228.3 813.7 208.3 802.3 188.3 789.3 168.2 774.6 148.2 754.8 124.2 736.5 104.1 712.6 80.1 686.3 56.1 662.6 36.1 631.2 12.0 619.7 4.0 612.9 0.0 M1240.0 440.7 1221.7 444.6 1204.0 450.3 1190.1 456.7 1177.5 464.7 1168.0 473.3 1164.0 478.2 1159.9 484.7 1156.7 492.7 1155.7 496.7 1155.0 504.7 1155.2 508.7 1156.7 516.7 1161.8 528.8 1170.2 540.8 1177.9 548.8 1192.0 559.9 1206.8 568.8 1224.0 576.6 1240.0 582.2 M627.0 697.0 701.7 616.9 751.8 560.8 788.1 516.7 803.1 496.7 816.9 476.7 829.0 456.7 837.5 440.6 844.6 424.6 850.4 408.6 854.9 392.6 858.8 372.5 860.6 356.5 861.3 336.5 860.4 316.5 857.2 292.4 852.8 272.4 846.8 252.4 837.4 228.3 827.8 208.3 816.4 188.3 803.4 168.2 788.7 148.2 768.9 124.2 750.6 104.1 726.6 80.1 700.4 56.1 671.8 32.0 645.4 12.0 633.8 4.0 626.9 0.0 M1240.0 434.9 1220.0 438.5 1200.0 444.0 1184.0 450.5 1172.0 457.1 1160.0 466.4 1154.1 472.7 1151.1 476.7 1148.0 481.9 1145.1 488.7 1144.0 492.7 1142.9 500.7 1142.9 504.7 1144.0 512.7 1146.5 520.7 1150.4 528.8 1158.9 540.8 1171.0 552.8 1187.5 564.8 1201.9 572.8 1220.3 580.8 1240.0 587.2 M641.1 697.0 719.8 612.9 770.2 556.8 807.0 512.7 822.2 492.7 833.4 476.7 843.5 460.7 852.3 444.6 859.7 428.6 865.7 412.6 870.3 396.6 873.6 380.5 875.6 364.5 876.6 344.5 876.0 324.5 873.2 300.4 868.2 276.4 862.4 256.4 853.3 232.3 844.0 212.3 832.9 192.3 820.2 172.2 805.8 152.2 786.4 128.2 764.6 104.1 740.7 80.1 714.5 56.1 685.9 32.0 659.6 12.0 647.9 4.0 641.0 0.0 M1240.0 429.3 1216.0 432.9 1196.0 437.8 1176.9 444.6 1168.6 448.6 1160.0 453.6 1152.0 459.4 1146.1 464.7 1142.4 468.7 1136.6 476.7 1134.5 480.7 1131.6 488.7 1130.7 492.7 1130.1 500.7 1130.9 508.7 1133.1 516.7 1138.8 528.8 1147.5 540.8 1159.5 552.8 1175.6 564.8 1188.0 572.2 1197.2 576.8 1216.5 584.8 1240.0 591.9 M655.2 697.0 738.0 608.9 789.1 552.8 826.7 508.7 839.2 492.7 850.7 476.7 861.0 460.7 869.9 444.6 877.3 428.6 881.8 416.6 886.4 400.6 889.6 384.6 891.5 368.5 892.3 348.5 891.5 328.5 888.7 304.4 883.8 280.4 878.1 260.4 869.2 236.3 860.1 216.3 847.0 192.3 834.3 172.2 819.9 152.2 800.4 128.2 778.7 104.1 754.7 80.1 728.5 56.1 699.9 32.0 673.7 12.0 662.0 4.0 655.0 0.0 M1240.0 423.9 1212.0 427.3 1188.0 432.6 1168.0 439.3 1156.3 444.6 1149.2 448.6 1137.8 456.7 1132.0 462.0 1126.3 468.7 1123.5 472.7 1119.5 480.7 1117.2 488.7 1116.4 496.7 1117.1 504.7 1119.0 512.7 1122.2 520.7 1126.6 528.8 1132.3 536.8 1139.4 544.8 1152.6 556.8 1169.9 568.8 1180.0 574.6 1192.7 580.8 1216.0 589.8 1240.0 596.5 M669.3 697.0 763.9 596.9 812.2 544.8 847.3 504.7 869.1 476.7 879.8 460.7 886.7 448.6 894.4 432.6 899.0 420.6 903.5 404.6 906.5 388.6 908.2 372.5 908.6 356.5 907.5 332.5 904.4 308.4 899.5 284.4 892.5 260.4 883.5 236.3 874.3 216.3 861.1 192.3 848.4 172.2 834.0 152.2 814.5 128.2 792.8 104.1 768.8 80.1 742.6 56.1 714.0 32.0 687.8 12.0 676.0 4.0 669.1 0.0 M1240.0 418.6 1212.0 421.1 1184.0 426.1 1161.3 432.6 1151.0 436.6 1140.0 441.9 1132.0 446.6 1123.5 452.6 1116.0 459.5 1111.5 464.7 1108.0 469.8 1104.5 476.7 1102.1 484.7 1101.3 492.7 1101.8 500.7 1103.7 508.7 1106.8 516.7 1111.1 524.8 1116.6 532.8 1123.3 540.8 1131.2 548.8 1140.5 556.8 1151.5 564.8 1164.3 572.8 1176.0 579.0 1188.0 584.6 1212.0 593.6 1224.0 597.1 1240.0 600.9 M683.4 697.0 847.6 524.8 872.9 496.7 892.1 472.7 900.3 460.7 907.5 448.6 913.3 436.6 917.9 424.6 921.3 412.6 924.3 396.6 925.5 384.6 926.0 368.5 924.8 344.5 921.9 320.5 916.3 292.4 909.7 268.4 901.1 244.4 890.5 220.3 877.6 196.3 865.2 176.3 851.0 156.2 832.0 132.2 810.6 108.2 787.0 84.1 761.1 60.1 733.0 36.1 701.8 12.0 690.1 4.0 683.1 0.0 M1240.0 413.3 1204.0 415.9 1176.0 420.2 1160.0 424.0 1148.0 427.6 1136.0 432.0 1125.7 436.6 1116.0 441.9 1106.0 448.6 1100.0 453.8 1093.6 460.7 1090.7 464.7 1086.5 472.7 1084.2 480.7 1083.5 488.7 1084.3 496.7 1086.4 504.7 1089.7 512.7 1096.8 524.8 1106.3 536.8 1114.0 544.8 1122.9 552.8 1133.2 560.8 1145.1 568.8 1158.8 576.8 1172.0 583.4 1184.0 588.7 1196.0 593.3 1212.0 598.4 1240.0 605.2 M697.6 697.0 788.0 603.2 886.3 504.7 901.4 488.7 915.1 472.7 921.2 464.7 929.1 452.6 933.4 444.6 938.5 432.6 940.9 424.6 943.5 412.6 944.8 400.6 945.3 388.6 944.2 364.5 940.7 336.5 935.4 308.4 928.1 280.4 920.2 256.4 910.4 232.3 898.5 208.3 884.5 184.3 868.1 160.2 849.4 136.2 828.4 112.2 805.1 88.1 775.2 60.1 747.0 36.1 715.9 12.0 704.1 4.0 697.2 0.0 M1240.0 408.2 1204.0 409.6 1172.0 413.2 1156.0 416.1 1140.0 419.8 1124.1 424.6 1113.0 428.6 1100.0 434.3 1088.2 440.6 1080.0 446.2 1072.4 452.6 1068.7 456.7 1063.5 464.7 1060.8 472.7 1060.1 480.7 1061.1 488.7 1065.1 500.7 1069.3 508.7 1077.3 520.7 1087.5 532.8 1095.4 540.8 1109.2 552.8 1119.9 560.8 1132.0 568.8 1145.7 576.8 1161.6 584.8 1176.0 591.1 1191.4 596.9 1208.0 602.0 1224.0 606.1 1240.0 609.4 M711.8 697.0 772.0 634.7 824.0 583.1 868.0 541.9 927.7 488.7 947.8 468.7 957.3 456.7 962.1 448.6 965.5 440.6 968.5 428.6 969.6 412.6 968.9 400.6 967.5 388.6 962.1 356.5 953.3 316.5 944.4 284.4 934.8 256.4 924.8 232.3 912.7 208.3 901.1 188.3 885.1 164.2 866.7 140.2 846.1 116.2 819.2 88.1 789.2 60.1 761.1 36.1 729.9 12.0 718.2 4.0 711.2 0.0 M1240.0 403.1 1216.0 403.1 1192.0 404.0 1168.0 405.9 1148.0 408.5 1116.0 414.5 1056.0 429.8 1040.0 432.7 1032.0 432.8 1028.0 432.2 1024.0 431.1 1020.0 429.1 1016.0 426.2 1010.7 420.6 1004.0 410.8 998.7 400.6 992.0 384.9 984.0 362.4 959.8 284.4 951.1 260.4 942.8 240.3 933.3 220.3 924.8 204.3 915.3 188.3 904.8 172.2 890.3 152.2 870.8 128.2 849.0 104.1 825.0 80.1 798.8 56.1 770.2 32.0 744.0 12.0 732.2 4.0 725.3 0.0 M726.0 697.0 776.0 645.6 816.0 606.3 852.0 573.0 884.0 545.7 916.0 521.2 932.0 510.1 948.0 500.0 964.0 490.9 976.0 485.2 988.0 480.8 996.0 479.0 1004.0 478.8 1008.0 479.5 1016.0 482.8 1020.0 485.4 1032.0 495.9 1060.8 524.8 1078.8 540.8 1094.1 552.8 1105.5 560.8 1118.0 568.8 1132.0 576.8 1156.5 588.8 1184.0 599.5 1212.0 607.7 1240.0 613.4 M1240.0 398.0 1204.0 397.3 1172.0 397.9 1144.0 399.6 1092.0 404.1 1072.0 404.6 1060.0 403.6 1048.0 400.8 1036.0 395.4 1028.0 389.7 1022.6 384.6 1016.0 376.7 1010.5 368.5 1004.0 356.8 992.0 329.4 967.6 264.4 953.6 232.3 943.4 212.3 934.3 196.3 921.6 176.3 910.4 160.2 894.9 140.2 874.2 116.2 855.3 96.1 830.6 72.1 803.6 48.1 779.2 28.0 758.0 12.0 746.3 4.0 739.3 0.0 M740.3 697.0 784.0 652.4 820.0 617.6 852.0 588.7 884.0 562.5 912.0 542.6 936.0 528.5 948.0 522.6 960.0 517.9 972.0 514.4 980.0 512.9 992.0 512.1 1004.0 513.4 1012.0 515.4 1024.0 520.2 1044.0 531.4 1082.9 556.8 1102.8 568.8 1125.1 580.8 1152.0 593.1 1172.5 600.9 1196.0 608.1 1216.0 613.0 1240.0 617.4 M1240.0 392.9 1184.0 390.5 1112.0 389.9 1088.0 388.3 1072.0 385.3 1060.0 381.2 1048.0 374.9 1040.0 368.9 1035.2 364.5 1028.0 356.4 1022.2 348.5 1016.0 338.5 1004.0 314.6 977.5 252.4 962.1 220.3 950.9 200.3 941.1 184.3 927.4 164.2 915.3 148.2 898.9 128.2 880.9 108.2 861.3 88.1 840.3 68.1 817.6 48.1 793.3 28.0 772.1 12.0 760.4 4.0 753.4 0.0 M754.6 697.0 792.0 659.2 824.0 628.6 852.0 603.7 880.0 581.2 904.0 564.3 928.0 550.3 940.0 544.5 952.0 539.8 964.0 536.2 972.0 534.5 984.0 533.1 996.0 533.2 1008.0 534.8 1020.0 537.8 1032.0 542.2 1044.0 547.5 1109.3 580.8 1126.7 588.8 1146.1 596.9 1168.6 604.9 1192.0 611.8 1216.0 617.3 1240.0 621.3 M1240.0 387.8 1136.0 380.1 1120.0 378.5 1104.0 376.1 1088.5 372.5 1076.0 368.1 1064.0 362.0 1052.0 353.4 1046.7 348.5 1039.4 340.5 1032.0 330.6 1025.6 320.5 1014.8 300.4 988.7 244.4 972.2 212.3 960.3 192.3 949.9 176.3 938.6 160.2 926.3 144.2 909.5 124.2 891.2 104.1 871.3 84.1 849.9 64.1 827.0 44.1 802.2 24.0 780.4 8.0 767.4 0.0 M769.0 697.0 804.0 662.1 832.0 635.9 860.0 611.7 884.0 593.1 908.0 577.1 920.0 570.2 932.0 564.1 952.0 556.1 960.0 553.8 972.0 551.2 984.0 549.8 996.0 549.7 1008.0 550.8 1024.0 554.2 1048.0 562.2 1119.7 592.9 1156.0 606.2 1176.0 612.2 1196.0 617.4 1216.0 621.5 1240.0 625.2 M1240.0 382.7 1156.0 372.9 1132.0 369.2 1116.0 365.8 1100.0 361.1 1088.0 356.2 1076.0 349.7 1064.0 340.8 1051.7 328.5 1044.0 318.7 1037.1 308.4 1024.0 285.3 995.3 228.3 979.5 200.3 969.5 184.3 958.5 168.2 946.7 152.2 933.8 136.2 920.0 120.2 901.4 100.1 881.2 80.1 859.5 60.1 836.2 40.1 816.3 24.0 794.5 8.0 781.5 0.0 M783.5 697.0 816.0 665.1 844.0 639.6 868.0 619.6 892.0 601.9 916.0 586.9 936.0 577.0 956.0 569.6 968.0 566.6 976.0 565.2 988.0 564.1 1004.0 564.3 1016.0 565.6 1032.0 568.9 1056.0 576.1 1123.1 600.9 1160.3 612.9 1180.0 618.2 1200.0 622.7 1220.0 626.3 1240.0 629.0 M1240.0 377.5 1204.1 372.5 1176.0 367.9 1152.0 363.2 1132.0 358.3 1114.3 352.5 1100.0 346.2 1088.0 339.3 1076.0 330.3 1069.7 324.5 1062.2 316.5 1050.1 300.4 1037.8 280.4 1007.8 224.3 991.4 196.3 981.0 180.3 969.8 164.2 957.6 148.2 944.6 132.2 930.5 116.2 911.5 96.1 891.1 76.1 873.6 60.1 850.3 40.1 830.3 24.0 808.5 8.0 795.6 0.0 M798.1 697.0 827.2 669.0 852.0 646.8 876.0 627.4 900.0 610.4 920.0 598.5 940.0 589.0 960.0 582.1 980.0 578.0 992.0 576.9 1008.0 577.0 1020.0 578.1 1036.0 580.9 1064.0 588.2 1128.3 608.9 1164.0 619.0 1184.0 623.8 1204.0 627.8 1240.0 632.8 M1240.0 372.3 1212.0 367.6 1184.0 362.0 1161.5 356.5 1144.0 351.3 1125.8 344.5 1112.0 337.8 1100.0 330.6 1088.0 321.4 1074.9 308.4 1068.0 300.1 1060.0 289.1 1048.0 270.0 1017.8 216.3 1000.6 188.3 989.7 172.2 978.0 156.2 955.2 128.2 940.9 112.2 921.6 92.1 900.8 72.1 883.1 56.1 859.5 36.1 839.1 20.0 822.6 8.0 809.6 0.0 M812.8 697.0 838.3 673.0 861.2 652.9 884.0 635.1 904.6 620.9 924.0 609.7 944.0 600.4 964.0 593.7 984.0 589.7 996.0 588.6 1012.0 588.5 1024.0 589.4 1040.0 591.7 1068.0 597.9 1135.6 616.9 1167.7 624.9 1204.0 632.0 1240.0 636.6 M1240.0 367.1 1216.0 362.3 1191.5 356.5 1172.0 350.9 1153.3 344.5 1136.0 337.1 1124.0 330.8 1112.0 323.2 1098.5 312.4 1084.0 297.6 1072.0 282.0 1060.0 263.6 1029.9 212.3 1012.1 184.3 989.0 152.2 965.8 124.2 947.4 104.1 931.6 88.1 897.2 56.1 873.5 36.1 853.2 20.0 836.6 8.0 823.7 0.0 M827.7 697.0 852.0 674.7 872.0 657.8 892.0 642.6 912.0 629.4 932.0 618.4 952.0 609.7 972.0 603.7 988.0 600.7 1000.0 599.5 1016.0 599.2 1032.0 600.2 1048.0 602.3 1076.0 607.9 1140.0 623.6 1172.0 630.6 1208.0 636.8 1240.0 640.3 M1240.0 361.7 1217.2 356.5 1200.0 351.8 1180.0 345.4 1164.0 339.2 1149.4 332.5 1135.0 324.5 1123.1 316.5 1112.0 307.5 1097.0 292.4 1084.3 276.4 1070.9 256.4 1041.8 208.3 1023.6 180.3 1000.0 148.2 976.3 120.2 957.6 100.1 941.6 84.1 906.6 52.1 887.6 36.1 867.2 20.0 850.7 8.0 837.7 0.0 M842.8 697.0 864.0 678.1 884.0 661.8 901.8 648.9 920.0 637.3 940.0 626.8 956.0 620.2 972.0 615.1 992.0 611.0 1004.0 609.7 1020.0 609.1 1036.0 609.8 1052.0 611.5 1080.0 616.2 1144.0 629.9 1176.0 636.0 1208.0 640.9 1240.0 644.0 M1240.0 356.3 1220.0 351.1 1204.0 346.1 1188.0 340.3 1169.9 332.5 1154.6 324.5 1144.0 317.9 1132.0 309.1 1121.9 300.4 1110.1 288.4 1096.0 270.9 1083.3 252.4 1051.0 200.3 1034.9 176.3 1014.0 148.2 990.4 120.2 971.7 100.1 955.7 84.1 920.7 52.1 901.6 36.1 881.3 20.0 864.7 8.0 851.8 0.0 M858.2 697.0 876.8 681.0 896.0 666.0 915.0 652.9 932.0 642.9 948.0 635.1 964.0 628.8 980.0 624.0 1000.0 620.2 1012.0 619.0 1028.0 618.5 1044.0 619.1 1060.0 620.6 1088.0 624.7 1152.0 636.6 1180.0 641.3 1212.0 645.4 1240.0 647.7 M1240.0 350.7 1224.0 346.1 1207.7 340.5 1192.0 334.1 1180.2 328.5 1165.7 320.5 1153.5 312.4 1143.0 304.4 1133.9 296.4 1122.2 284.4 1109.1 268.4 1095.2 248.4 1064.0 198.7 1046.1 172.2 1024.9 144.2 1000.8 116.2 969.7 84.1 934.7 52.1 915.7 36.1 895.4 20.0 878.8 8.0 865.8 0.0 M873.9 697.0 892.0 682.1 909.9 669.0 928.0 657.3 943.4 648.9 960.0 641.5 976.0 635.8 992.0 631.7 1008.0 629.0 1020.0 627.8 1036.0 627.3 1052.0 627.8 1068.0 629.1 1096.0 632.7 1184.0 646.3 1212.0 649.4 1240.0 651.4 M1240.0 345.0 1226.1 340.5 1212.0 335.2 1200.0 329.9 1188.0 323.8 1175.4 316.5 1163.7 308.4 1153.6 300.4 1144.7 292.4 1129.8 276.4 1114.6 256.4 1103.9 240.3 1073.6 192.3 1054.2 164.2 1035.6 140.2 1014.8 116.2 983.8 84.1 948.8 52.1 929.7 36.1 909.4 20.0 892.9 8.0 879.9 0.0 M890.0 697.0 908.0 683.0 922.5 673.0 936.0 664.7 952.0 656.3 968.0 649.3 984.0 643.9 1000.0 640.0 1016.0 637.4 1028.0 636.2 1044.0 635.7 1072.0 636.8 1100.0 639.6 1188.0 651.2 1216.0 653.7 1240.0 655.1 M1240.0 339.1 1224.0 333.2 1212.9 328.5 1192.0 317.4 1172.9 304.4 1163.1 296.4 1154.6 288.4 1140.1 272.4 1125.1 252.4 1084.3 188.3 1067.8 164.2 1049.4 140.2 1028.8 116.2 1013.8 100.1 997.8 84.1 962.8 52.1 943.8 36.1 923.5 20.0 906.9 8.0 893.9 0.0 M906.5 697.0 920.0 687.1 936.0 676.6 949.5 669.0 964.0 661.9 976.1 656.9 992.0 651.8 1008.0 647.9 1024.0 645.4 1036.0 644.2 1052.0 643.6 1080.0 644.4 1108.0 646.7 1192.0 655.9 1216.0 657.7 1240.0 658.8 M1240.0 333.1 1219.6 324.5 1208.0 318.4 1198.0 312.4 1181.2 300.4 1171.8 292.4 1164.0 284.8 1149.5 268.4 1137.6 252.4 1127.0 236.3 1096.0 186.3 1078.3 160.2 1060.0 136.4 1042.7 116.2 1027.8 100.1 1011.8 84.1 976.9 52.1 957.8 36.1 937.5 20.0 921.0 8.0 908.0 0.0 M923.7 697.0 936.0 688.7 952.0 679.1 964.0 672.9 980.0 666.0 994.5 660.9 1008.0 657.3 1020.0 654.8 1036.0 652.6 1060.0 651.1 1088.0 651.6 1116.0 653.4 1192.0 660.2 1240.0 662.6 M1240.0 326.8 1220.0 317.4 1205.0 308.4 1188.8 296.4 1175.7 284.4 1161.4 268.4 1146.6 248.4 1133.8 228.3 1107.1 184.3 1088.3 156.2 1073.2 136.2 1056.0 115.8 1041.6 100.1 1025.8 84.1 1008.9 68.1 990.9 52.1 971.9 36.1 951.6 20.0 935.0 8.0 922.0 0.0 M941.8 697.0 954.8 689.0 968.0 682.0 980.0 676.4 992.0 671.7 1004.0 667.8 1016.0 664.7 1028.0 662.2 1044.0 660.0 1068.0 658.3 1096.0 658.4 1124.0 659.8 1196.0 664.8 1240.0 666.3 M1240.0 320.4 1220.0 309.9 1204.0 299.0 1187.2 284.4 1172.5 268.4 1163.3 256.4 1152.4 240.3 1116.5 180.3 1100.0 155.0 1079.9 128.2 1055.3 100.1 1027.1 72.1 995.6 44.1 960.3 16.0 943.0 4.0 936.1 0.0 M960.9 697.0 984.0 685.2 1005.4 677.0 1028.0 670.9 1040.0 668.7 1056.0 666.6 1080.0 665.0 1104.0 664.9 1200.0 669.3 1240.0 670.1 M1240.0 313.7 1223.8 304.4 1207.3 292.4 1194.1 280.4 1179.9 264.4 1170.9 252.4 1160.3 236.3 1127.7 180.3 1110.0 152.2 1092.0 127.4 1080.0 112.8 1068.8 100.1 1041.0 72.1 1009.6 44.1 990.0 28.0 974.3 16.0 957.1 4.0 950.1 0.0 M981.4 697.0 1004.0 687.2 1024.0 680.7 1048.0 675.5 1072.0 672.6 1092.0 671.4 1116.0 671.1 1204.0 673.6 1240.0 673.9 M1240.0 306.7 1224.0 296.6 1212.0 287.1 1200.0 275.7 1186.8 260.4 1178.0 248.4 1167.7 232.3 1136.0 176.3 1118.8 148.2 1100.0 121.9 1080.0 98.1 1054.7 72.1 1023.6 44.1 1004.0 28.0 988.4 16.0 971.1 4.0 964.2 0.0 M1004.1 697.0 1024.0 689.8 1041.9 685.0 1063.5 681.0 1084.0 678.7 1104.0 677.5 1128.0 677.0 1208.0 677.9 1240.0 677.7 M1240.0 299.4 1228.0 291.3 1215.0 280.4 1203.2 268.4 1190.3 252.4 1182.1 240.3 1172.3 224.3 1143.7 172.2 1128.0 145.6 1110.5 120.2 1092.0 97.3 1068.0 71.9 1037.5 44.1 1018.0 28.0 1002.4 16.0 985.2 4.0 978.2 0.0 M1030.0 697.0 1048.0 691.9 1064.0 688.6 1080.0 686.2 1100.0 684.2 1136.0 682.6 1240.0 681.6 M1240.0 291.8 1228.0 282.7 1216.7 272.4 1205.9 260.4 1196.0 247.4 1188.6 236.3 1179.0 220.3 1148.0 162.6 1136.0 141.9 1120.0 117.7 1103.3 96.1 1092.0 83.3 1080.0 70.8 1064.7 56.1 1051.2 44.1 1031.9 28.0 1016.4 16.0 999.2 4.0 992.3 0.0 M1061.3 697.0 1088.0 692.2 1120.0 689.1 1152.0 687.6 1240.0 685.5 M1240.0 283.8 1228.0 273.7 1218.7 264.4 1208.6 252.4 1200.0 240.3 1192.3 228.3 1183.1 212.3 1156.0 160.3 1144.0 138.9 1128.0 113.8 1111.7 92.1 1101.4 80.1 1090.2 68.1 1064.0 43.4 1045.8 28.0 1030.3 16.0 1013.2 4.0 1006.3 0.0 M1104.0 697.0 1124.0 694.9 1148.0 693.2 1240.0 689.5 M1240.0 275.3 1232.0 268.2 1220.9 256.4 1211.4 244.4 1203.2 232.3 1189.2 208.3 1162.6 156.2 1149.5 132.2 1136.0 110.5 1119.7 88.1 1109.7 76.1 1098.7 64.1 1086.7 52.1 1073.6 40.1 1059.5 28.0 1044.2 16.0 1027.2 4.0 1020.3 0.0 M1176.1 697.0 1240.0 693.5 M1240.0 266.4 1232.0 258.5 1223.2 248.4 1214.3 236.3 1206.5 224.3 1193.0 200.3 1168.0 150.3 1156.0 127.8 1141.7 104.1 1127.4 84.1 1117.7 72.1 1108.0 61.2 1096.0 48.9 1084.0 37.7 1057.9 16.0 1041.1 4.0 1034.2 0.0 M1240.0 257.0 1232.0 248.4 1224.0 238.2 1209.7 216.3 1198.7 196.3 1172.0 142.0 1160.4 120.2 1148.0 99.3 1134.8 80.1 1125.4 68.1 1116.0 57.2 1095.0 36.1 1071.4 16.0 1056.0 4.8 1048.1 0.0 M1240.0 247.1 1232.0 237.5 1225.3 228.3 1212.9 208.3 1202.3 188.3 1168.0 118.6 1156.0 97.5 1141.9 76.1 1132.8 64.1 1124.0 53.6 1104.0 32.9 1092.0 22.2 1080.0 12.4 1068.4 4.0 1061.8 0.0 M1240.0 236.6 1228.1 220.3 1216.1 200.3 1205.7 180.3 1184.0 134.7 1172.0 110.9 1160.0 89.6 1148.0 71.2 1132.0 50.4 1115.0 32.0 1104.0 21.7 1092.5 12.0 1081.8 4.0 1075.2 0.0 M1240.0 225.5 1228.4 208.3 1219.3 192.3 1209.1 172.2 1178.5 108.2 1168.0 88.8 1156.0 69.4 1140.4 48.1 1124.0 29.6 1105.0 12.0 1094.7 4.0 1088.4 0.0 M1240.0 213.7 1231.4 200.3 1222.5 184.3 1212.5 164.2 1184.0 103.9 1172.0 81.4 1161.4 64.1 1148.0 45.2 1132.0 26.5 1116.0 11.1 1107.2 4.0 1101.1 0.0 M1240.0 201.4 1232.0 188.0 1221.6 168.2 1185.6 92.1 1176.0 74.3 1168.0 60.9 1156.0 43.3 1140.3 24.0 1124.0 8.0 1113.4 0.0 M1240.0 188.5 1232.0 174.2 1224.0 158.4 1191.1 88.1 1182.7 72.1 1173.4 56.1 1162.8 40.1 1150.3 24.0 1136.0 8.8 1125.1 0.0 M1240.0 175.0 1226.3 148.2 1196.0 83.1 1180.0 53.5 1168.0 34.9 1156.6 20.0 1145.6 8.0 1136.3 0.0 M1240.0 161.0 1228.0 136.8 1201.8 80.1 1187.1 52.1 1176.0 34.0 1165.9 20.0 1155.6 8.0 1146.9 0.0 M1240.0 146.4 1207.1 76.1 1192.0 46.9 1183.0 32.0 1174.8 20.0 1165.2 8.0 1156.9 0.0 M1240.0 131.5 1212.0 71.2 1198.1 44.1 1188.6 28.0 1180.5 16.0 1172.0 5.4 1166.5 0.0 M1240.0 116.1 1216.0 64.5 1203.5 40.1 1196.0 27.0 1188.9 16.0 1183.0 8.0 1175.7 0.0 M1240.0 100.3 1220.0 57.6 1208.0 34.3 1194.3 12.0 1188.3 4.0 1184.5 0.0 M1240.0 84.4 1222.7 48.1 1212.2 28.0 1202.4 12.0 1196.7 4.0 1193.0 0.0 M1240.0 68.3 1226.2 40.1 1217.7 24.0 1207.8 8.0 1201.4 0.0 M1240.0 52.3 1223.2 20.0 1215.8 8.0 1209.6 0.0 M1240.0 36.5 1226.4 12.0 1221.1 4.0 1217.7 0.0 M1240.0 21.5 1231.9 8.0 1225.9 0.0 M1240.0 7.6 1234.2 0.0"/></g>
<g fill="#f2aeae">
<path d="M446.5 332.8h22.5v-10.4l24.2 26.5-24.2 27v-10.3h-22.5z"/>
<path d="M750.8 332.8h22.4v-10.4l23.6 26.5-23.6 27v-10.3h-22.4z"/>
</g>
<g fill="#ee4237" stroke="#f3d0cc" stroke-width="1.3">
<rect x="207.6" y="282.6" width="217" height="131.5" rx="12"/>
<rect x="511.4" y="282.6" width="217.5" height="131.5" rx="12"/>
<rect x="815.2" y="282.6" width="217.5" height="131.5" rx="12"/>
</g>
<g fill="#fff" font-family="Liberation Sans" font-size="61" text-anchor="middle">
<text x="316" y="369">1</text>
<text x="620" y="369">2</text>
<text x="924" y="369">3</text>
</g>
<rect x="1127" y="51" width="70" height="70" fill="#e6e6e6"/>
<clipPath id="lc"><rect x="1127" y="51" width="70" height="70"/></clipPath>
<g clip-path="url(#lc)" fill="none" stroke="#fafafa" stroke-width="1.2" opacity="0.8">
<path d="M1140 40C1150 60 1160 90 1168 130"/><path d="M1150 40C1165 62 1178 90 1186 130"/><path d="M1172 40C1185 60 1195 80 1205 110"/>
</g>
<circle cx="1162" cy="86" r="33" fill="none" stroke="#555" stroke-width="1"/>
<path d="M1134.5 92L1142.2 82.2H1144.6V92M1138.5 88.2H1144" fill="none" stroke="#231f38" stroke-width="2.6" stroke-linejoin="round"/>
<rect x="1146.7" y="85" width="2.6" height="7" fill="#8a3fd8"/><circle cx="1148" cy="82.2" r="1.3" fill="#8a3fd8"/>
<text x="1151.5" y="92" font-family="Liberation Sans" font-weight="bold" font-size="13.8" fill="#231f38" letter-spacing="-0.7">PPT</text>
<text x="1175.8" y="92" font-family="Liberation Sans" font-size="7.5" fill="#231f38" letter-spacing="-0.2">.com</text>
<text x="1140" y="676" font-family="Liberation Sans" font-size="11" fill="#fff">7</text>
</svg>
</div>

<!-- notes -->
<div class="a" style="left:224px;top:844px;width:1298px;height:1px;background:#e2e2e2"></div>
<div class="a" style="left:233px;top:851px;font-size:14px;color:#555;white-space:nowrap">Click to add notes</div>
<!-- right scrollbar -->
<div class="a" style="left:1507px;top:128px;width:14px;height:663px;background:#f6f6f6;border-radius:7px"></div>
<div class="a" style="left:1522px;top:128px;width:1px;height:792px;background:#e2e2e2"></div>
<div class="a" style="left:1510px;top:130px;width:0;height:0;border-left:4px solid transparent;border-right:4px solid transparent;border-bottom:6px solid #707070"></div>
<div class="a" style="left:1511px;top:688px;width:6px;height:90px;background:#7a7a7a;border-radius:3px"></div>
<div class="a" style="left:1510px;top:782px;width:0;height:0;border-left:4px solid transparent;border-right:4px solid transparent;border-top:6px solid #707070"></div>
<!-- status bar -->
<div class="a" style="left:0;top:920px;width:1536px;height:13px;background:#f3f3f3"></div>

<div class="a" style="left:24.5px;top:141px;width:160px;height:91px;border-radius:4px;background:#dedede"></div>
<svg class="a" style="left:25.5px;top:142px;border-radius:3px" width="158" height="89" viewBox="0 0 158 89"><defs><linearGradient id="rb"><stop offset="0" stop-color="#e8372c"/><stop offset="1" stop-color="#e8372c" stop-opacity="0.1"/></linearGradient></defs><rect width="158" height="89" fill="#050505"/><circle cx="90.2" cy="0.3" r="0.4" fill="#a02838" opacity="0.44"/><circle cx="91.9" cy="0.8" r="0.4" fill="#a02838" opacity="0.47"/><circle cx="93.5" cy="1.3" r="0.4" fill="#a02838" opacity="0.50"/><circle cx="95.0" cy="1.8" r="0.4" fill="#a02838" opacity="0.52"/><circle cx="96.3" cy="2.2" r="0.4" fill="#a02838" opacity="0.55"/><circle cx="97.5" cy="2.6" r="0.4" fill="#a02838" opacity="0.58"/><circle cx="98.7" cy="3.0" r="0.4" fill="#a02838" opacity="0.61"/><circle cx="99.6" cy="3.3" r="0.4" fill="#a02838" opacity="0.63"/><circle cx="100.5" cy="3.6" r="0.4" fill="#a02838" opacity="0.66"/><circle cx="101.2" cy="3.8" r="0.4" fill="#a02838" opacity="0.69"/><circle cx="101.9" cy="4.0" r="0.4" fill="#a02838" opacity="0.72"/><circle cx="102.4" cy="4.2" r="0.4" fill="#a02838" opacity="0.75"/><circle cx="102.7" cy="4.3" r="0.4" fill="#a02838" opacity="0.78"/><circle cx="103.0" cy="4.4" r="0.4" fill="#a02838" opacity="0.81"/><circle cx="103.1" cy="4.4" r="0.4" fill="#a02838" opacity="0.84"/><circle cx="74.6" cy="0.2" r="0.6" fill="#4a6a34" opacity="0.50"/><circle cx="77.3" cy="1.0" r="0.6" fill="#5a4a26" opacity="0.50"/><circle cx="79.8" cy="1.8" r="0.6" fill="#5a4a26" opacity="0.50"/><circle cx="82.2" cy="2.6" r="0.6" fill="#4a6a34" opacity="0.50"/><circle cx="84.5" cy="3.4" r="0.6" fill="#7a3020" opacity="0.50"/><circle cx="86.7" cy="4.1" r="0.4" fill="#a02838" opacity="0.35"/><circle cx="88.8" cy="4.8" r="0.4" fill="#a02838" opacity="0.38"/><circle cx="90.8" cy="5.4" r="0.4" fill="#a02838" opacity="0.40"/><circle cx="92.6" cy="6.0" r="0.4" fill="#a02838" opacity="0.43"/><circle cx="94.4" cy="6.6" r="0.4" fill="#a02838" opacity="0.46"/><circle cx="96.0" cy="7.1" r="0.4" fill="#a02838" opacity="0.49"/><circle cx="97.5" cy="7.6" r="0.4" fill="#a02838" opacity="0.51"/><circle cx="98.8" cy="8.0" r="0.4" fill="#a02838" opacity="0.54"/><circle cx="100.1" cy="8.4" r="0.4" fill="#a02838" opacity="0.57"/><circle cx="101.2" cy="8.8" r="0.4" fill="#a02838" opacity="0.60"/><circle cx="102.3" cy="9.1" r="0.4" fill="#a02838" opacity="0.63"/><circle cx="103.1" cy="9.4" r="0.4" fill="#a02838" opacity="0.66"/><circle cx="103.9" cy="9.7" r="0.4" fill="#a02838" opacity="0.69"/><circle cx="104.5" cy="9.9" r="0.4" fill="#a02838" opacity="0.72"/><circle cx="105.0" cy="10.0" r="0.4" fill="#a02838" opacity="0.75"/><circle cx="105.4" cy="10.2" r="0.4" fill="#a02838" opacity="0.78"/><circle cx="105.7" cy="10.3" r="0.4" fill="#a02838" opacity="0.81"/><circle cx="105.8" cy="10.3" r="0.4" fill="#a02838" opacity="0.84"/><circle cx="61.4" cy="1.0" r="0.6" fill="#5a4a26" opacity="0.50"/><circle cx="64.6" cy="2.0" r="0.6" fill="#7a3020" opacity="0.50"/><circle cx="67.7" cy="3.0" r="0.6" fill="#5a4a26" opacity="0.50"/><circle cx="70.7" cy="4.0" r="0.6" fill="#5a4a26" opacity="0.50"/><circle cx="73.6" cy="4.9" r="0.6" fill="#4a6a34" opacity="0.50"/><circle cx="76.4" cy="5.8" r="0.6" fill="#5a4a26" opacity="0.50"/><circle cx="79.1" cy="6.7" r="0.6" fill="#4a6a34" opacity="0.50"/><circle cx="81.7" cy="7.6" r="0.6" fill="#7a3020" opacity="0.50"/><circle cx="84.2" cy="8.4" r="0.6" fill="#7a3020" opacity="0.50"/><circle cx="86.5" cy="9.1" r="0.6" fill="#5a4a26" opacity="0.50"/><circle cx="88.8" cy="9.9" r="0.6" fill="#4a6a34" opacity="0.50"/><circle cx="90.9" cy="10.6" r="0.4" fill="#a02838" opacity="0.37"/><circle cx="92.9" cy="11.2" r="0.4" fill="#a02838" opacity="0.39"/><circle cx="94.8" cy="11.8" r="0.4" fill="#a02838" opacity="0.42"/><circle cx="96.6" cy="12.4" r="0.4" fill="#a02838" opacity="0.45"/><circle cx="98.3" cy="13.0" r="0.4" fill="#a02838" opacity="0.48"/><circle cx="99.8" cy="13.5" r="0.4" fill="#a02838" opacity="0.51"/><circle cx="101.2" cy="13.9" r="0.4" fill="#a02838" opacity="0.54"/><circle cx="102.5" cy="14.3" r="0.4" fill="#a02838" opacity="0.56"/><circle cx="103.7" cy="14.7" r="0.4" fill="#a02838" opacity="0.59"/><circle cx="104.7" cy="15.0" r="0.4" fill="#a02838" opacity="0.62"/><circle cx="105.6" cy="15.3" r="0.4" fill="#a02838" opacity="0.65"/><circle cx="106.4" cy="15.6" r="0.4" fill="#a02838" opacity="0.68"/><circle cx="107.0" cy="15.8" r="0.4" fill="#a02838" opacity="0.71"/><circle cx="107.6" cy="16.0" r="0.4" fill="#a02838" opacity="0.74"/><circle cx="108.0" cy="16.1" r="0.4" fill="#a02838" opacity="0.77"/><circle cx="108.2" cy="16.2" r="0.4" fill="#a02838" opacity="0.80"/><circle cx="108.3" cy="16.2" r="0.4" fill="#a02838" opacity="0.83"/><circle cx="44.9" cy="0.8" r="0.6" fill="#4a6a34" opacity="0.50"/><circle cx="48.6" cy="2.1" r="0.6" fill="#5a4a26" opacity="0.50"/><circle cx="52.3" cy="3.2" r="0.6" fill="#7a3020" opacity="0.50"/><circle cx="55.8" cy="4.4" r="0.6" fill="#5a4a26" opacity="0.50"/><circle cx="59.3" cy="5.5" r="0.6" fill="#5a4a26" opacity="0.50"/><circle cx="62.7" cy="6.6" r="0.6" fill="#7a3020" opacity="0.50"/><circle cx="65.9" cy="7.7" r="0.6" fill="#7a3020" opacity="0.50"/><circle cx="69.1" cy="8.7" r="0.6" fill="#5a4a26" opacity="0.50"/><circle cx="72.2" cy="9.7" r="0.6" fill="#4a6a34" opacity="0.50"/><circle cx="75.2" cy="10.7" r="0.6" fill="#4a6a34" opacity="0.50"/><circle cx="78.0" cy="11.6" r="0.6" fill="#5a4a26" opacity="0.50"/><circle cx="80.8" cy="12.5" r="0.6" fill="#4a6a34" opacity="0.50"/><circle cx="83.4" cy="13.4" r="0.6" fill="#5a4a26" opacity="0.50"/><circle cx="86.0" cy="14.2" r="0.6" fill="#7a3020" opacity="0.50"/><circle cx="88.4" cy="15.0" r="0.6" fill="#5a4a26" opacity="0.50"/><circle cx="90.7" cy="15.7" r="0.6" fill="#4a6a34" opacity="0.50"/><circle cx="92.9" cy="16.4" r="0.4" fill="#a02838" opacity="0.35"/><circle cx="94.9" cy="17.1" r="0.4" fill="#a02838" opacity="0.38"/><circle cx="96.9" cy="17.7" r="0.4" fill="#a02838" opacity="0.41"/><circle cx="98.7" cy="18.3" r="0.4" fill="#a02838" opacity="0.44"/><circle cx="100.4" cy="18.9" r="0.4" fill="#a02838" opacity="0.47"/><circle cx="102.0" cy="19.4" r="0.4" fill="#a02838" opacity="0.50"/><circle cx="103.4" cy="19.9" r="0.4" fill="#a02838" opacity="0.53"/><circle cx="104.7" cy="20.3" r="0.4" fill="#a02838" opacity="0.56"/><circle cx="105.9" cy="20.7" r="0.4" fill="#a02838" opacity="0.59"/><circle cx="107.0" cy="21.0" r="0.4" fill="#a02838" opacity="0.62"/><circle cx="107.9" cy="21.3" r="0.4" fill="#a02838" opacity="0.65"/><circle cx="108.7" cy="21.6" r="0.4" fill="#a02838" opacity="0.68"/><circle cx="109.4" cy="21.8" r="0.4" fill="#a02838" opacity="0.71"/><circle cx="109.9" cy="22.0" r="0.4" fill="#a02838" opacity="0.74"/><circle cx="110.3" cy="22.1" r="0.4" fill="#a02838" opacity="0.77"/><circle cx="110.6" cy="22.2" r="0.4" fill="#a02838" opacity="0.80"/><circle cx="110.7" cy="22.2" r="0.4" fill="#a02838" opacity="0.83"/><circle cx="29.6" cy="1.2" r="0.6" fill="#5a4a26" opacity="0.50"/><circle cx="33.7" cy="2.6" r="0.6" fill="#4a6a34" opacity="0.50"/><circle cx="37.8" cy="3.9" r="0.6" fill="#4a6a34" opacity="0.50"/><circle cx="41.8" cy="5.2" r="0.6" fill="#5a4a26" opacity="0.50"/><circle cx="45.7" cy="6.4" r="0.6" fill="#4a6a34" opacity="0.50"/><circle cx="49.5" cy="7.7" r="0.6" fill="#7a3020" opacity="0.50"/><circle cx="53.2" cy="8.9" r="0.6" fill="#4a6a34" opacity="0.50"/><circle cx="56.8" cy="10.1" r="0.6" fill="#7a3020" opacity="0.50"/><circle cx="60.4" cy="11.2" r="0.6" fill="#7a3020" opacity="0.50"/><circle cx="63.8" cy="12.3" r="0.6" fill="#5a4a26" opacity="0.50"/><circle cx="67.2" cy="13.4" r="0.6" fill="#5a4a26" opacity="0.50"/><circle cx="70.4" cy="14.5" r="0.6" fill="#7a3020" opacity="0.50"/><circle cx="73.5" cy="15.5" r="0.6" fill="#5a4a26" opacity="0.50"/><circle cx="76.6" cy="16.5" r="0.6" fill="#7a3020" opacity="0.50"/><circle cx="79.5" cy="17.4" r="0.6" fill="#7a3020" opacity="0.50"/><circle cx="82.3" cy="18.4" r="0.6" fill="#5a4a26" opacity="0.50"/><circle cx="85.0" cy="19.2" r="0.6" fill="#5a4a26" opacity="0.50"/><circle cx="87.6" cy="20.1" r="0.6" fill="#7a3020" opacity="0.50"/><circle cx="90.1" cy="20.9" r="0.6" fill="#4a6a34" opacity="0.50"/><circle cx="92.5" cy="21.6" r="0.6" fill="#7a3020" opacity="0.50"/><circle cx="94.7" cy="22.4" r="0.6" fill="#4a6a34" opacity="0.50"/><circle cx="96.8" cy="23.1" r="0.4" fill="#a02838" opacity="0.37"/><circle cx="98.8" cy="23.7" r="0.4" fill="#a02838" opacity="0.40"/><circle cx="100.7" cy="24.3" r="0.4" fill="#a02838" opacity="0.43"/><circle cx="102.4" cy="24.9" r="0.4" fill="#a02838" opacity="0.46"/><circle cx="104.0" cy="25.4" r="0.4" fill="#a02838" opacity="0.49"/><circle cx="105.5" cy="25.9" r="0.4" fill="#a02838" opacity="0.52"/><circle cx="106.8" cy="26.3" r="0.4" fill="#a02838" opacity="0.55"/><circle cx="108.0" cy="26.7" r="0.4" fill="#a02838" opacity="0.58"/><circle cx="109.1" cy="27.1" r="0.4" fill="#a02838" opacity="0.61"/><circle cx="110.1" cy="27.4" r="0.4" fill="#a02838" opacity="0.64"/><circle cx="110.9" cy="27.6" r="0.4" fill="#a02838" opacity="0.68"/><circle cx="111.6" cy="27.9" r="0.4" fill="#a02838" opacity="0.71"/><circle cx="112.1" cy="28.0" r="0.4" fill="#a02838" opacity="0.74"/><circle cx="112.5" cy="28.2" r="0.4" fill="#a02838" opacity="0.77"/><circle cx="112.8" cy="28.2" r="0.4" fill="#a02838" opacity="0.80"/><circle cx="112.9" cy="28.3" r="0.4" fill="#a02838" opacity="0.83"/><circle cx="12.4" cy="1.1" r="0.6" fill="#4a6a34" opacity="0.50"/><circle cx="16.8" cy="2.5" r="0.6" fill="#4a6a34" opacity="0.50"/><circle cx="21.3" cy="4.0" r="0.6" fill="#7a3020" opacity="0.50"/><circle cx="25.6" cy="5.4" r="0.6" fill="#4a6a34" opacity="0.50"/><circle cx="29.9" cy="6.8" r="0.6" fill="#7a3020" opacity="0.50"/><circle cx="34.1" cy="8.2" r="0.6" fill="#5a4a26" opacity="0.50"/><circle cx="38.3" cy="9.5" r="0.6" fill="#7a3020" opacity="0.50"/><circle cx="42.3" cy="10.8" r="0.6" fill="#5a4a26" opacity="0.50"/><circle cx="46.3" cy="12.1" r="0.6" fill="#7a3020" opacity="0.50"/><circle cx="50.2" cy="13.4" r="0.6" fill="#7a3020" opacity="0.50"/><circle cx="54.0" cy="14.6" r="0.6" fill="#5a4a26" opacity="0.50"/><circle cx="57.7" cy="15.8" r="0.6" fill="#7a3020" opacity="0.50"/><circle cx="61.3" cy="17.0" r="0.6" fill="#5a4a26" opacity="0.50"/><circle cx="64.8" cy="18.1" r="0.6" fill="#7a3020" opacity="0.50"/><circle cx="68.2" cy="19.2" r="0.6" fill="#5a4a26" opacity="0.50"/><circle cx="71.6" cy="20.3" r="0.6" fill="#5a4a26" opacity="0.50"/><circle cx="74.8" cy="21.4" r="0.6" fill="#7a3020" opacity="0.50"/><circle cx="77.9" cy="22.4" r="0.6" fill="#5a4a26" opacity="0.50"/><circle cx="80.9" cy="23.3" r="0.6" fill="#4a6a34" opacity="0.50"/><circle cx="83.7" cy="24.3" r="0.6" fill="#7a3020" opacity="0.50"/><circle cx="86.5" cy="25.2" r="0.6" fill="#5a4a26" opacity="0.50"/><circle cx="89.1" cy="26.0" r="0.6" fill="#4a6a34" opacity="0.50"/><circle cx="91.7" cy="26.8" r="0.6" fill="#7a3020" opacity="0.50"/><circle cx="94.1" cy="27.6" r="0.6" fill="#5a4a26" opacity="0.50"/><circle cx="96.3" cy="28.4" r="0.6" fill="#5a4a26" opacity="0.50"/><circle cx="98.5" cy="29.1" r="0.4" fill="#a02838" opacity="0.36"/><circle cx="100.5" cy="29.7" r="0.4" fill="#a02838" opacity="0.39"/><circle cx="102.4" cy="30.3" r="0.4" fill="#a02838" opacity="0.42"/><circle cx="104.2" cy="30.9" r="0.4" fill="#a02838" opacity="0.45"/><circle cx="105.8" cy="31.5" r="0.4" fill="#a02838" opacity="0.48"/><circle cx="107.4" cy="31.9" r="0.4" fill="#a02838" opacity="0.51"/><circle cx="108.7" cy="32.4" r="0.4" fill="#a02838" opacity="0.55"/><circle cx="110.0" cy="32.8" r="0.4" fill="#a02838" opacity="0.58"/><circle cx="111.1" cy="33.2" r="0.4" fill="#a02838" opacity="0.61"/><circle cx="112.0" cy="33.5" r="0.4" fill="#a02838" opacity="0.64"/><circle cx="112.9" cy="33.7" r="0.4" fill="#a02838" opacity="0.67"/><circle cx="113.6" cy="34.0" r="0.4" fill="#a02838" opacity="0.70"/><circle cx="114.1" cy="34.1" r="0.4" fill="#a02838" opacity="0.74"/><circle cx="114.5" cy="34.3" r="0.4" fill="#a02838" opacity="0.77"/><circle cx="114.8" cy="34.4" r="0.4" fill="#a02838" opacity="0.80"/><circle cx="115.0" cy="34.4" r="0.4" fill="#a02838" opacity="0.83"/><circle cx="2.9" cy="3.6" r="0.6" fill="#5a4a26" opacity="0.50"/><circle cx="7.6" cy="5.1" r="0.6" fill="#4a6a34" opacity="0.50"/><circle cx="12.2" cy="6.6" r="0.6" fill="#5a4a26" opacity="0.50"/><circle cx="16.8" cy="8.1" r="0.6" fill="#7a3020" opacity="0.50"/><circle cx="21.3" cy="9.6" r="0.6" fill="#5a4a26" opacity="0.50"/><circle cx="25.7" cy="11.0" r="0.6" fill="#5a4a26" opacity="0.50"/><circle cx="30.1" cy="12.4" r="0.6" fill="#5a4a26" opacity="0.50"/><circle cx="34.4" cy="13.8" r="0.6" fill="#4a6a34" opacity="0.50"/><circle cx="38.6" cy="15.2" r="0.6" fill="#5a4a26" opacity="0.50"/><circle cx="42.8" cy="16.5" r="0.6" fill="#5a4a26" opacity="0.50"/><circle cx="46.8" cy="17.8" r="0.6" fill="#4a6a34" opacity="0.50"/><circle cx="50.8" cy="19.1" r="0.6" fill="#5a4a26" opacity="0.50"/><circle cx="54.7" cy="20.4" r="0.6" fill="#5a4a26" opacity="0.50"/><circle cx="58.4" cy="21.6" r="0.6" fill="#7a3020" opacity="0.50"/><circle cx="62.1" cy="22.8" r="0.6" fill="#7a3020" opacity="0.50"/><circle cx="65.7" cy="24.0" r="0.6" fill="#4a6a34" opacity="0.50"/><circle cx="69.2" cy="25.1" r="0.6" fill="#4a6a34" opacity="0.50"/><circle cx="72.6" cy="26.2" r="0.6" fill="#7a3020" opacity="0.50"/><circle cx="75.8" cy="27.3" r="0.6" fill="#5a4a26" opacity="0.50"/><circle cx="79.0" cy="28.3" r="0.6" fill="#7a3020" opacity="0.50"/><circle cx="82.0" cy="29.3" r="0.6" fill="#4a6a34" opacity="0.50"/><circle cx="85.0" cy="30.2" r="0.6" fill="#7a3020" opacity="0.50"/><circle cx="87.8" cy="31.2" r="0.6" fill="#4a6a34" opacity="0.50"/><circle cx="90.5" cy="32.0" r="0.6" fill="#7a3020" opacity="0.50"/><circle cx="93.1" cy="32.9" r="0.6" fill="#4a6a34" opacity="0.50"/><circle cx="95.5" cy="33.7" r="0.6" fill="#4a6a34" opacity="0.50"/><circle cx="97.8" cy="34.4" r="0.6" fill="#7a3020" opacity="0.50"/><circle cx="100.0" cy="35.1" r="0.4" fill="#a02838" opacity="0.35"/><circle cx="102.1" cy="35.8" r="0.4" fill="#a02838" opacity="0.38"/><circle cx="104.1" cy="36.4" r="0.4" fill="#a02838" opacity="0.41"/><circle cx="105.9" cy="37.0" r="0.4" fill="#a02838" opacity="0.44"/><circle cx="107.5" cy="37.6" r="0.4" fill="#a02838" opacity="0.48"/><circle cx="109.1" cy="38.1" r="0.4" fill="#a02838" opacity="0.51"/><circle cx="110.5" cy="38.5" r="0.4" fill="#a02838" opacity="0.54"/><circle cx="111.7" cy="38.9" r="0.4" fill="#a02838" opacity="0.57"/><circle cx="112.9" cy="39.3" r="0.4" fill="#a02838" opacity="0.60"/><circle cx="113.9" cy="39.6" r="0.4" fill="#a02838" opacity="0.64"/><circle cx="114.7" cy="39.9" r="0.4" fill="#a02838" opacity="0.67"/><circle cx="115.4" cy="40.1" r="0.4" fill="#a02838" opacity="0.70"/><circle cx="116.0" cy="40.3" r="0.4" fill="#a02838" opacity="0.73"/><circle cx="116.4" cy="40.5" r="0.4" fill="#a02838" opacity="0.77"/><circle cx="116.7" cy="40.5" r="0.4" fill="#a02838" opacity="0.80"/><circle cx="116.8" cy="40.6" r="0.4" fill="#a02838" opacity="0.83"/><circle cx="2.5" cy="9.1" r="0.6" fill="#7a3020" opacity="0.50"/><circle cx="7.3" cy="10.7" r="0.6" fill="#7a3020" opacity="0.50"/><circle cx="12.0" cy="12.2" r="0.6" fill="#4a6a34" opacity="0.50"/><circle cx="16.6" cy="13.7" r="0.6" fill="#4a6a34" opacity="0.50"/><circle cx="21.2" cy="15.2" r="0.6" fill="#5a4a26" opacity="0.50"/><circle cx="25.8" cy="16.7" r="0.6" fill="#5a4a26" opacity="0.50"/><circle cx="30.2" cy="18.1" r="0.6" fill="#4a6a34" opacity="0.50"/><circle cx="34.6" cy="19.5" r="0.6" fill="#7a3020" opacity="0.50"/><circle cx="38.9" cy="20.9" r="0.6" fill="#5a4a26" opacity="0.50"/><circle cx="43.1" cy="22.3" r="0.6" fill="#5a4a26" opacity="0.50"/><circle cx="47.2" cy="23.7" r="0.6" fill="#7a3020" opacity="0.50"/><circle cx="51.3" cy="25.0" r="0.6" fill="#5a4a26" opacity="0.50"/><circle cx="55.2" cy="26.2" r="0.6" fill="#7a3020" opacity="0.50"/><circle cx="59.1" cy="27.5" r="0.6" fill="#5a4a26" opacity="0.50"/><circle cx="62.8" cy="28.7" r="0.6" fill="#4a6a34" opacity="0.50"/><circle cx="66.5" cy="29.9" r="0.6" fill="#4a6a34" opacity="0.50"/><circle cx="70.0" cy="31.1" r="0.6" fill="#7a3020" opacity="0.50"/><circle cx="73.4" cy="32.2" r="0.6" fill="#4a6a34" opacity="0.50"/><circle cx="76.8" cy="33.3" r="0.6" fill="#4a6a34" opacity="0.50"/><circle cx="80.0" cy="34.3" r="0.6" fill="#4a6a34" opacity="0.50"/><circle cx="83.1" cy="35.3" r="0.6" fill="#5a4a26" opacity="0.50"/><circle cx="86.1" cy="36.3" r="0.6" fill="#5a4a26" opacity="0.50"/><circle cx="89.0" cy="37.2" r="0.6" fill="#4a6a34" opacity="0.50"/><circle cx="91.7" cy="38.1" r="0.6" fill="#4a6a34" opacity="0.50"/><circle cx="94.3" cy="39.0" r="0.6" fill="#7a3020" opacity="0.50"/><circle cx="96.8" cy="39.8" r="0.6" fill="#7a3020" opacity="0.50"/><circle cx="99.2" cy="40.5" r="0.6" fill="#5a4a26" opacity="0.50"/><circle cx="101.4" cy="41.3" r="0.6" fill="#7a3020" opacity="0.50"/><circle cx="103.5" cy="42.0" r="0.4" fill="#a02838" opacity="0.37"/><circle cx="105.5" cy="42.6" r="0.4" fill="#a02838" opacity="0.41"/><circle cx="107.3" cy="43.2" r="0.4" fill="#a02838" opacity="0.44"/><circle cx="109.1" cy="43.7" r="0.4" fill="#a02838" opacity="0.47"/><circle cx="110.6" cy="44.3" r="0.4" fill="#a02838" opacity="0.50"/><circle cx="112.0" cy="44.7" r="0.4" fill="#a02838" opacity="0.53"/><circle cx="113.3" cy="45.1" r="0.4" fill="#a02838" opacity="0.57"/><circle cx="114.5" cy="45.5" r="0.4" fill="#a02838" opacity="0.60"/><circle cx="115.5" cy="45.8" r="0.4" fill="#a02838" opacity="0.63"/><circle cx="116.4" cy="46.1" r="0.4" fill="#a02838" opacity="0.67"/><circle cx="117.1" cy="46.4" r="0.4" fill="#a02838" opacity="0.70"/><circle cx="117.7" cy="46.5" r="0.4" fill="#a02838" opacity="0.73"/><circle cx="118.1" cy="46.7" r="0.4" fill="#a02838" opacity="0.77"/><circle cx="118.4" cy="46.8" r="0.4" fill="#a02838" opacity="0.80"/><circle cx="118.5" cy="46.8" r="0.4" fill="#a02838" opacity="0.83"/><circle cx="2.0" cy="14.7" r="0.6" fill="#4a6a34" opacity="0.50"/><circle cx="6.8" cy="16.3" r="0.6" fill="#5a4a26" opacity="0.50"/><circle cx="11.6" cy="17.9" r="0.6" fill="#4a6a34" opacity="0.50"/><circle cx="16.4" cy="19.4" r="0.6" fill="#7a3020" opacity="0.50"/><circle cx="21.1" cy="20.9" r="0.6" fill="#7a3020" opacity="0.50"/><circle cx="25.7" cy="22.4" r="0.6" fill="#7a3020" opacity="0.50"/><circle cx="30.2" cy="23.9" r="0.6" fill="#4a6a34" opacity="0.50"/><circle cx="34.6" cy="25.3" r="0.6" fill="#7a3020" opacity="0.50"/><circle cx="39.0" cy="26.8" r="0.6" fill="#7a3020" opacity="0.50"/><circle cx="43.3" cy="28.2" r="0.6" fill="#7a3020" opacity="0.50"/><circle cx="47.5" cy="29.5" r="0.6" fill="#5a4a26" opacity="0.50"/><circle cx="51.6" cy="30.9" r="0.6" fill="#7a3020" opacity="0.50"/><circle cx="55.6" cy="32.2" r="0.6" fill="#5a4a26" opacity="0.50"/><circle cx="59.5" cy="33.4" r="0.6" fill="#5a4a26" opacity="0.50"/><circle cx="63.4" cy="34.7" r="0.6" fill="#5a4a26" opacity="0.50"/><circle cx="67.1" cy="35.9" r="0.6" fill="#5a4a26" opacity="0.50"/><circle cx="70.7" cy="37.1" r="0.6" fill="#4a6a34" opacity="0.50"/><circle cx="74.2" cy="38.2" r="0.6" fill="#5a4a26" opacity="0.50"/><circle cx="77.6" cy="39.3" r="0.6" fill="#5a4a26" opacity="0.50"/><circle cx="80.8" cy="40.4" r="0.6" fill="#7a3020" opacity="0.50"/><circle cx="84.0" cy="41.4" r="0.6" fill="#7a3020" opacity="0.50"/><circle cx="87.0" cy="42.4" r="0.6" fill="#5a4a26" opacity="0.50"/><circle cx="90.0" cy="43.3" r="0.6" fill="#5a4a26" opacity="0.50"/><circle cx="92.8" cy="44.2" r="0.6" fill="#5a4a26" opacity="0.50"/><circle cx="95.4" cy="45.1" r="0.6" fill="#4a6a34" opacity="0.50"/><circle cx="98.0" cy="45.9" r="0.6" fill="#7a3020" opacity="0.50"/><circle cx="100.4" cy="46.7" r="0.6" fill="#7a3020" opacity="0.50"/><circle cx="102.6" cy="47.4" r="0.6" fill="#7a3020" opacity="0.50"/><circle cx="104.8" cy="48.1" r="0.4" fill="#a02838" opacity="0.37"/><circle cx="106.8" cy="48.8" r="0.4" fill="#a02838" opacity="0.40"/><circle cx="108.7" cy="49.4" r="0.4" fill="#a02838" opacity="0.43"/><circle cx="110.4" cy="50.0" r="0.4" fill="#a02838" opacity="0.46"/><circle cx="112.0" cy="50.5" r="0.4" fill="#a02838" opacity="0.50"/><circle cx="113.5" cy="51.0" r="0.4" fill="#a02838" opacity="0.53"/><circle cx="114.8" cy="51.4" r="0.4" fill="#a02838" opacity="0.56"/><circle cx="115.9" cy="51.8" r="0.4" fill="#a02838" opacity="0.59"/><circle cx="117.0" cy="52.1" r="0.4" fill="#a02838" opacity="0.63"/><circle cx="117.8" cy="52.4" r="0.4" fill="#a02838" opacity="0.66"/><circle cx="118.6" cy="52.6" r="0.4" fill="#a02838" opacity="0.70"/><circle cx="119.2" cy="52.8" r="0.4" fill="#a02838" opacity="0.73"/><circle cx="119.6" cy="53.0" r="0.4" fill="#a02838" opacity="0.76"/><circle cx="119.9" cy="53.0" r="0.4" fill="#a02838" opacity="0.80"/><circle cx="120.0" cy="53.1" r="0.4" fill="#a02838" opacity="0.83"/><circle cx="1.4" cy="20.4" r="0.6" fill="#5a4a26" opacity="0.50"/><circle cx="6.4" cy="22.0" r="0.6" fill="#7a3020" opacity="0.50"/><circle cx="11.2" cy="23.6" r="0.6" fill="#5a4a26" opacity="0.50"/><circle cx="16.0" cy="25.2" r="0.6" fill="#7a3020" opacity="0.50"/><circle cx="20.8" cy="26.7" r="0.6" fill="#4a6a34" opacity="0.50"/><circle cx="25.5" cy="28.2" r="0.6" fill="#7a3020" opacity="0.50"/><circle cx="30.1" cy="29.7" r="0.6" fill="#5a4a26" opacity="0.50"/><circle cx="34.6" cy="31.2" r="0.6" fill="#7a3020" opacity="0.50"/><circle cx="39.0" cy="32.7" r="0.6" fill="#4a6a34" opacity="0.50"/><circle cx="43.4" cy="34.1" r="0.6" fill="#7a3020" opacity="0.50"/><circle cx="47.7" cy="35.5" r="0.6" fill="#5a4a26" opacity="0.50"/><circle cx="51.8" cy="36.8" r="0.6" fill="#5a4a26" opacity="0.50"/><circle cx="55.9" cy="38.1" r="0.6" fill="#5a4a26" opacity="0.50"/><circle cx="59.9" cy="39.4" r="0.6" fill="#4a6a34" opacity="0.50"/><circle cx="63.8" cy="40.7" r="0.6" fill="#4a6a34" opacity="0.50"/><circle cx="67.6" cy="41.9" r="0.6" fill="#5a4a26" opacity="0.50"/><circle cx="71.2" cy="43.1" r="0.6" fill="#5a4a26" opacity="0.50"/><circle cx="74.8" cy="44.3" r="0.6" fill="#7a3020" opacity="0.50"/><circle cx="78.2" cy="45.4" r="0.6" fill="#7a3020" opacity="0.50"/><circle cx="81.5" cy="46.5" r="0.6" fill="#7a3020" opacity="0.50"/><circle cx="84.8" cy="47.5" r="0.6" fill="#5a4a26" opacity="0.50"/><circle cx="87.8" cy="48.5" r="0.6" fill="#7a3020" opacity="0.50"/><circle cx="90.8" cy="49.5" r="0.6" fill="#5a4a26" opacity="0.50"/><circle cx="93.6" cy="50.4" r="0.6" fill="#5a4a26" opacity="0.50"/><circle cx="96.4" cy="51.3" r="0.6" fill="#7a3020" opacity="0.50"/><circle cx="98.9" cy="52.1" r="0.6" fill="#5a4a26" opacity="0.50"/><circle cx="101.4" cy="52.9" r="0.6" fill="#7a3020" opacity="0.50"/><circle cx="103.7" cy="53.7" r="0.6" fill="#4a6a34" opacity="0.50"/><circle cx="105.9" cy="54.4" r="0.4" fill="#a02838" opacity="0.36"/><circle cx="107.9" cy="55.0" r="0.4" fill="#a02838" opacity="0.39"/><circle cx="109.8" cy="55.7" r="0.4" fill="#a02838" opacity="0.42"/><circle cx="111.6" cy="56.2" r="0.4" fill="#a02838" opacity="0.46"/><circle cx="113.2" cy="56.8" r="0.4" fill="#a02838" opacity="0.49"/><circle cx="114.7" cy="57.2" r="0.4" fill="#a02838" opacity="0.52"/><circle cx="116.0" cy="57.7" r="0.4" fill="#a02838" opacity="0.56"/><circle cx="117.2" cy="58.1" r="0.4" fill="#a02838" opacity="0.59"/><circle cx="118.2" cy="58.4" r="0.4" fill="#a02838" opacity="0.62"/><circle cx="119.1" cy="58.7" r="0.4" fill="#a02838" opacity="0.66"/><circle cx="119.9" cy="58.9" r="0.4" fill="#a02838" opacity="0.69"/><circle cx="120.5" cy="59.1" r="0.4" fill="#a02838" opacity="0.73"/><circle cx="120.9" cy="59.3" r="0.4" fill="#a02838" opacity="0.76"/><circle cx="121.2" cy="59.4" r="0.4" fill="#a02838" opacity="0.80"/><circle cx="121.4" cy="59.4" r="0.4" fill="#a02838" opacity="0.83"/><circle cx="0.8" cy="26.2" r="0.6" fill="#5a4a26" opacity="0.50"/><circle cx="5.8" cy="27.8" r="0.6" fill="#4a6a34" opacity="0.50"/><circle cx="10.7" cy="29.4" r="0.6" fill="#5a4a26" opacity="0.50"/><circle cx="15.6" cy="31.0" r="0.6" fill="#4a6a34" opacity="0.50"/><circle cx="20.4" cy="32.6" r="0.6" fill="#7a3020" opacity="0.50"/><circle cx="25.2" cy="34.1" r="0.6" fill="#7a3020" opacity="0.50"/><circle cx="29.8" cy="35.6" r="0.6" fill="#5a4a26" opacity="0.50"/><circle cx="34.4" cy="37.1" r="0.6" fill="#7a3020" opacity="0.50"/><circle cx="38.9" cy="38.6" r="0.6" fill="#7a3020" opacity="0.50"/><circle cx="43.4" cy="40.0" r="0.6" fill="#5a4a26" opacity="0.50"/><circle cx="47.7" cy="41.4" r="0.6" fill="#5a4a26" opacity="0.50"/><circle cx="51.9" cy="42.8" r="0.6" fill="#7a3020" opacity="0.50"/><circle cx="56.1" cy="44.2" r="0.6" fill="#4a6a34" opacity="0.50"/><circle cx="60.1" cy="45.5" r="0.6" fill="#7a3020" opacity="0.50"/><circle cx="64.1" cy="46.8" r="0.6" fill="#4a6a34" opacity="0.50"/><circle cx="67.9" cy="48.0" r="0.6" fill="#7a3020" opacity="0.50"/><circle cx="71.6" cy="49.2" r="0.6" fill="#7a3020" opacity="0.50"/><circle cx="75.2" cy="50.4" r="0.6" fill="#5a4a26" opacity="0.50"/><circle cx="78.7" cy="51.5" r="0.6" fill="#7a3020" opacity="0.50"/><circle cx="82.1" cy="52.6" r="0.6" fill="#7a3020" opacity="0.50"/><circle cx="85.4" cy="53.7" r="0.6" fill="#7a3020" opacity="0.50"/><circle cx="88.5" cy="54.7" r="0.6" fill="#4a6a34" opacity="0.50"/><circle cx="91.5" cy="55.7" r="0.6" fill="#4a6a34" opacity="0.50"/><circle cx="94.4" cy="56.6" r="0.6" fill="#5a4a26" opacity="0.50"/><circle cx="97.1" cy="57.5" r="0.6" fill="#5a4a26" opacity="0.50"/><circle cx="99.8" cy="58.4" r="0.6" fill="#5a4a26" opacity="0.50"/><circle cx="102.3" cy="59.2" r="0.6" fill="#4a6a34" opacity="0.50"/><circle cx="104.6" cy="59.9" r="0.6" fill="#7a3020" opacity="0.50"/><circle cx="106.8" cy="60.6" r="0.4" fill="#a02838" opacity="0.35"/><circle cx="108.9" cy="61.3" r="0.4" fill="#a02838" opacity="0.38"/><circle cx="110.8" cy="61.9" r="0.4" fill="#a02838" opacity="0.42"/><circle cx="112.6" cy="62.5" r="0.4" fill="#a02838" opacity="0.45"/><circle cx="114.3" cy="63.1" r="0.4" fill="#a02838" opacity="0.48"/><circle cx="115.7" cy="63.5" r="0.4" fill="#a02838" opacity="0.52"/><circle cx="117.1" cy="64.0" r="0.4" fill="#a02838" opacity="0.55"/><circle cx="118.3" cy="64.4" r="0.4" fill="#a02838" opacity="0.59"/><circle cx="119.4" cy="64.7" r="0.4" fill="#a02838" opacity="0.62"/><circle cx="120.3" cy="65.0" r="0.4" fill="#a02838" opacity="0.66"/><circle cx="121.0" cy="65.3" r="0.4" fill="#a02838" opacity="0.69"/><circle cx="121.6" cy="65.5" r="0.4" fill="#a02838" opacity="0.73"/><circle cx="122.1" cy="65.6" r="0.4" fill="#a02838" opacity="0.76"/><circle cx="122.4" cy="65.7" r="0.4" fill="#a02838" opacity="0.80"/><circle cx="122.5" cy="65.8" r="0.4" fill="#a02838" opacity="0.83"/><circle cx="0.0" cy="32.0" r="0.6" fill="#5a4a26" opacity="0.50"/><circle cx="5.1" cy="33.6" r="0.6" fill="#4a6a34" opacity="0.50"/><circle cx="10.1" cy="35.3" r="0.6" fill="#5a4a26" opacity="0.50"/><circle cx="15.1" cy="36.9" r="0.6" fill="#7a3020" opacity="0.50"/><circle cx="20.0" cy="38.5" r="0.6" fill="#4a6a34" opacity="0.50"/><circle cx="24.8" cy="40.0" r="0.6" fill="#7a3020" opacity="0.50"/><circle cx="29.5" cy="41.6" r="0.6" fill="#4a6a34" opacity="0.50"/><circle cx="34.2" cy="43.1" r="0.6" fill="#5a4a26" opacity="0.50"/><circle cx="38.7" cy="44.6" r="0.6" fill="#7a3020" opacity="0.50"/><circle cx="43.2" cy="46.0" r="0.6" fill="#5a4a26" opacity="0.50"/><circle cx="47.6" cy="47.5" r="0.6" fill="#5a4a26" opacity="0.50"/><circle cx="51.9" cy="48.9" r="0.6" fill="#4a6a34" opacity="0.50"/><circle cx="56.1" cy="50.2" r="0.6" fill="#4a6a34" opacity="0.50"/><circle cx="60.2" cy="51.6" r="0.6" fill="#5a4a26" opacity="0.50"/><circle cx="64.2" cy="52.9" r="0.6" fill="#7a3020" opacity="0.50"/><circle cx="68.1" cy="54.1" r="0.6" fill="#7a3020" opacity="0.50"/><circle cx="71.9" cy="55.3" r="0.6" fill="#5a4a26" opacity="0.50"/><circle cx="75.5" cy="56.5" r="0.6" fill="#4a6a34" opacity="0.50"/><circle cx="79.1" cy="57.7" r="0.6" fill="#7a3020" opacity="0.50"/><circle cx="82.5" cy="58.8" r="0.6" fill="#4a6a34" opacity="0.50"/><circle cx="85.8" cy="59.9" r="0.6" fill="#4a6a34" opacity="0.50"/><circle cx="89.0" cy="60.9" r="0.6" fill="#7a3020" opacity="0.50"/><circle cx="92.1" cy="61.9" r="0.6" fill="#5a4a26" opacity="0.50"/><circle cx="95.0" cy="62.9" r="0.6" fill="#5a4a26" opacity="0.50"/><circle cx="97.8" cy="63.8" r="0.6" fill="#4a6a34" opacity="0.50"/><circle cx="100.4" cy="64.6" r="0.6" fill="#5a4a26" opacity="0.50"/><circle cx="102.9" cy="65.4" r="0.6" fill="#7a3020" opacity="0.50"/><circle cx="105.3" cy="66.2" r="0.6" fill="#7a3020" opacity="0.50"/><circle cx="107.6" cy="66.9" r="0.6" fill="#4a6a34" opacity="0.50"/><circle cx="109.7" cy="67.6" r="0.4" fill="#a02838" opacity="0.38"/><circle cx="111.6" cy="68.3" r="0.4" fill="#a02838" opacity="0.41"/><circle cx="113.5" cy="68.9" r="0.4" fill="#a02838" opacity="0.44"/><circle cx="115.1" cy="69.4" r="0.4" fill="#a02838" opacity="0.48"/><circle cx="116.6" cy="69.9" r="0.4" fill="#a02838" opacity="0.51"/><circle cx="118.0" cy="70.3" r="0.4" fill="#a02838" opacity="0.55"/><circle cx="119.2" cy="70.7" r="0.4" fill="#a02838" opacity="0.58"/><circle cx="120.3" cy="71.1" r="0.4" fill="#a02838" opacity="0.62"/><circle cx="121.2" cy="71.4" r="0.4" fill="#a02838" opacity="0.65"/><circle cx="122.0" cy="71.6" r="0.4" fill="#a02838" opacity="0.69"/><circle cx="122.6" cy="71.8" r="0.4" fill="#a02838" opacity="0.72"/><circle cx="123.1" cy="72.0" r="0.4" fill="#a02838" opacity="0.76"/><circle cx="123.4" cy="72.1" r="0.4" fill="#a02838" opacity="0.80"/><circle cx="123.5" cy="72.1" r="0.4" fill="#a02838" opacity="0.83"/><circle cx="4.3" cy="39.5" r="0.6" fill="#4a6a34" opacity="0.50"/><circle cx="9.4" cy="41.2" r="0.6" fill="#4a6a34" opacity="0.50"/><circle cx="14.4" cy="42.8" r="0.6" fill="#5a4a26" opacity="0.50"/><circle cx="19.4" cy="44.4" r="0.6" fill="#4a6a34" opacity="0.50"/><circle cx="24.3" cy="46.0" r="0.6" fill="#7a3020" opacity="0.50"/><circle cx="29.1" cy="47.6" r="0.6" fill="#5a4a26" opacity="0.50"/><circle cx="33.8" cy="49.1" r="0.6" fill="#4a6a34" opacity="0.50"/><circle cx="38.4" cy="50.6" r="0.6" fill="#7a3020" opacity="0.50"/><circle cx="43.0" cy="52.1" r="0.6" fill="#7a3020" opacity="0.50"/><circle cx="47.4" cy="53.5" r="0.6" fill="#5a4a26" opacity="0.50"/><circle cx="51.8" cy="55.0" r="0.6" fill="#4a6a34" opacity="0.50"/><circle cx="56.0" cy="56.3" r="0.6" fill="#5a4a26" opacity="0.50"/><circle cx="60.2" cy="57.7" r="0.6" fill="#7a3020" opacity="0.50"/><circle cx="64.2" cy="59.0" r="0.6" fill="#5a4a26" opacity="0.50"/><circle cx="68.2" cy="60.3" r="0.6" fill="#4a6a34" opacity="0.50"/><circle cx="72.0" cy="61.5" r="0.6" fill="#7a3020" opacity="0.50"/><circle cx="75.7" cy="62.7" r="0.6" fill="#7a3020" opacity="0.50"/><circle cx="79.3" cy="63.9" r="0.6" fill="#5a4a26" opacity="0.50"/><circle cx="82.8" cy="65.0" r="0.6" fill="#7a3020" opacity="0.50"/><circle cx="86.1" cy="66.1" r="0.6" fill="#7a3020" opacity="0.50"/><circle cx="89.4" cy="67.2" r="0.6" fill="#7a3020" opacity="0.50"/><circle cx="92.4" cy="68.2" r="0.6" fill="#5a4a26" opacity="0.50"/><circle cx="95.4" cy="69.1" r="0.6" fill="#7a3020" opacity="0.50"/><circle cx="98.2" cy="70.1" r="0.6" fill="#7a3020" opacity="0.50"/><circle cx="100.9" cy="70.9" r="0.6" fill="#7a3020" opacity="0.50"/><circle cx="103.5" cy="71.8" r="0.6" fill="#5a4a26" opacity="0.50"/><circle cx="105.9" cy="72.5" r="0.6" fill="#7a3020" opacity="0.50"/><circle cx="108.2" cy="73.3" r="0.6" fill="#4a6a34" opacity="0.50"/><circle cx="110.3" cy="74.0" r="0.4" fill="#a02838" opacity="0.37"/><circle cx="112.3" cy="74.6" r="0.4" fill="#a02838" opacity="0.41"/><circle cx="114.1" cy="75.2" r="0.4" fill="#a02838" opacity="0.44"/><circle cx="115.8" cy="75.8" r="0.4" fill="#a02838" opacity="0.47"/><circle cx="117.4" cy="76.3" r="0.4" fill="#a02838" opacity="0.51"/><circle cx="118.7" cy="76.7" r="0.4" fill="#a02838" opacity="0.54"/><circle cx="120.0" cy="77.1" r="0.4" fill="#a02838" opacity="0.58"/><circle cx="121.1" cy="77.5" r="0.4" fill="#a02838" opacity="0.62"/><circle cx="122.0" cy="77.8" r="0.4" fill="#a02838" opacity="0.65"/><circle cx="122.8" cy="78.0" r="0.4" fill="#a02838" opacity="0.69"/><circle cx="123.4" cy="78.2" r="0.4" fill="#a02838" opacity="0.72"/><circle cx="123.9" cy="78.4" r="0.4" fill="#a02838" opacity="0.76"/><circle cx="124.2" cy="78.5" r="0.4" fill="#a02838" opacity="0.80"/><circle cx="124.3" cy="78.5" r="0.4" fill="#a02838" opacity="0.83"/><circle cx="3.5" cy="45.5" r="0.6" fill="#7a3020" opacity="0.50"/><circle cx="8.6" cy="47.2" r="0.6" fill="#4a6a34" opacity="0.50"/><circle cx="13.7" cy="48.8" r="0.6" fill="#4a6a34" opacity="0.50"/><circle cx="18.7" cy="50.4" r="0.6" fill="#4a6a34" opacity="0.50"/><circle cx="23.7" cy="52.0" r="0.6" fill="#7a3020" opacity="0.50"/><circle cx="28.5" cy="53.6" r="0.6" fill="#5a4a26" opacity="0.50"/><circle cx="33.3" cy="55.2" r="0.6" fill="#5a4a26" opacity="0.50"/><circle cx="38.0" cy="56.7" r="0.6" fill="#7a3020" opacity="0.50"/><circle cx="42.6" cy="58.2" r="0.6" fill="#5a4a26" opacity="0.50"/><circle cx="47.1" cy="59.7" r="0.6" fill="#5a4a26" opacity="0.50"/><circle cx="51.5" cy="61.1" r="0.6" fill="#4a6a34" opacity="0.50"/><circle cx="55.8" cy="62.5" r="0.6" fill="#4a6a34" opacity="0.50"/><circle cx="60.0" cy="63.9" r="0.6" fill="#5a4a26" opacity="0.50"/><circle cx="64.1" cy="65.2" r="0.6" fill="#7a3020" opacity="0.50"/><circle cx="68.1" cy="66.5" r="0.6" fill="#5a4a26" opacity="0.50"/><circle cx="72.0" cy="67.7" r="0.6" fill="#5a4a26" opacity="0.50"/><circle cx="75.8" cy="69.0" r="0.6" fill="#5a4a26" opacity="0.50"/><circle cx="79.4" cy="70.1" r="0.6" fill="#7a3020" opacity="0.50"/><circle cx="82.9" cy="71.3" r="0.6" fill="#5a4a26" opacity="0.50"/><circle cx="86.3" cy="72.4" r="0.6" fill="#7a3020" opacity="0.50"/><circle cx="89.6" cy="73.4" r="0.6" fill="#4a6a34" opacity="0.50"/><circle cx="92.7" cy="74.5" r="0.6" fill="#4a6a34" opacity="0.50"/><circle cx="95.7" cy="75.4" r="0.6" fill="#5a4a26" opacity="0.50"/><circle cx="98.5" cy="76.4" r="0.6" fill="#7a3020" opacity="0.50"/><circle cx="101.3" cy="77.3" r="0.6" fill="#4a6a34" opacity="0.50"/><circle cx="103.9" cy="78.1" r="0.6" fill="#4a6a34" opacity="0.50"/><circle cx="106.3" cy="78.9" r="0.6" fill="#4a6a34" opacity="0.50"/><circle cx="108.6" cy="79.6" r="0.6" fill="#4a6a34" opacity="0.50"/><circle cx="110.8" cy="80.3" r="0.4" fill="#a02838" opacity="0.37"/><circle cx="112.8" cy="81.0" r="0.4" fill="#a02838" opacity="0.40"/><circle cx="114.6" cy="81.6" r="0.4" fill="#a02838" opacity="0.43"/><circle cx="116.3" cy="82.2" r="0.4" fill="#a02838" opacity="0.47"/><circle cx="117.9" cy="82.7" r="0.4" fill="#a02838" opacity="0.50"/><circle cx="119.3" cy="83.1" r="0.4" fill="#a02838" opacity="0.54"/><circle cx="120.6" cy="83.5" r="0.4" fill="#a02838" opacity="0.58"/><circle cx="121.7" cy="83.9" r="0.4" fill="#a02838" opacity="0.61"/><circle cx="122.6" cy="84.2" r="0.4" fill="#a02838" opacity="0.65"/><circle cx="123.4" cy="84.4" r="0.4" fill="#a02838" opacity="0.68"/><circle cx="124.0" cy="84.6" r="0.4" fill="#a02838" opacity="0.72"/><circle cx="124.5" cy="84.8" r="0.4" fill="#a02838" opacity="0.76"/><circle cx="124.8" cy="84.9" r="0.4" fill="#a02838" opacity="0.79"/><circle cx="125.0" cy="85.0" r="0.4" fill="#a02838" opacity="0.83"/><circle cx="2.6" cy="51.5" r="0.6" fill="#5a4a26" opacity="0.50"/><circle cx="7.8" cy="53.2" r="0.6" fill="#5a4a26" opacity="0.50"/><circle cx="12.9" cy="54.8" r="0.6" fill="#4a6a34" opacity="0.50"/><circle cx="18.0" cy="56.5" r="0.6" fill="#7a3020" opacity="0.50"/><circle cx="23.0" cy="58.1" r="0.6" fill="#5a4a26" opacity="0.50"/><circle cx="27.9" cy="59.7" r="0.6" fill="#4a6a34" opacity="0.50"/><circle cx="32.7" cy="61.3" r="0.6" fill="#4a6a34" opacity="0.50"/><circle cx="37.5" cy="62.8" r="0.6" fill="#7a3020" opacity="0.50"/><circle cx="42.1" cy="64.3" r="0.6" fill="#5a4a26" opacity="0.50"/><circle cx="46.7" cy="65.8" r="0.6" fill="#4a6a34" opacity="0.50"/><circle cx="51.1" cy="67.3" r="0.6" fill="#4a6a34" opacity="0.50"/><circle cx="55.5" cy="68.7" r="0.6" fill="#5a4a26" opacity="0.50"/><circle cx="59.8" cy="70.1" r="0.6" fill="#7a3020" opacity="0.50"/><circle cx="63.9" cy="71.4" r="0.6" fill="#4a6a34" opacity="0.50"/><circle cx="67.9" cy="72.7" r="0.6" fill="#5a4a26" opacity="0.50"/><circle cx="71.8" cy="74.0" r="0.6" fill="#4a6a34" opacity="0.50"/><circle cx="75.6" cy="75.2" r="0.6" fill="#5a4a26" opacity="0.50"/><circle cx="79.3" cy="76.4" r="0.6" fill="#5a4a26" opacity="0.50"/><circle cx="82.9" cy="77.6" r="0.6" fill="#7a3020" opacity="0.50"/><circle cx="86.3" cy="78.7" r="0.6" fill="#4a6a34" opacity="0.50"/><circle cx="89.6" cy="79.8" r="0.6" fill="#5a4a26" opacity="0.50"/><circle cx="92.8" cy="80.8" r="0.6" fill="#4a6a34" opacity="0.50"/><circle cx="95.8" cy="81.8" r="0.6" fill="#7a3020" opacity="0.50"/><circle cx="98.7" cy="82.7" r="0.6" fill="#4a6a34" opacity="0.50"/><circle cx="101.5" cy="83.6" r="0.6" fill="#7a3020" opacity="0.50"/><circle cx="104.1" cy="84.5" r="0.6" fill="#5a4a26" opacity="0.50"/><circle cx="106.5" cy="85.3" r="0.6" fill="#7a3020" opacity="0.50"/><circle cx="108.9" cy="86.0" r="0.6" fill="#4a6a34" opacity="0.50"/><circle cx="111.0" cy="86.7" r="0.4" fill="#a02838" opacity="0.36"/><circle cx="113.1" cy="87.4" r="0.4" fill="#a02838" opacity="0.39"/><circle cx="115.0" cy="88.0" r="0.4" fill="#a02838" opacity="0.43"/><circle cx="116.7" cy="88.6" r="0.4" fill="#a02838" opacity="0.47"/><circle cx="1.5" cy="57.5" r="0.6" fill="#7a3020" opacity="0.50"/><circle cx="6.8" cy="59.2" r="0.6" fill="#4a6a34" opacity="0.50"/><circle cx="12.0" cy="60.9" r="0.6" fill="#4a6a34" opacity="0.50"/><circle cx="17.1" cy="62.6" r="0.6" fill="#4a6a34" opacity="0.50"/><circle cx="22.2" cy="64.2" r="0.6" fill="#5a4a26" opacity="0.50"/><circle cx="27.1" cy="65.8" r="0.6" fill="#4a6a34" opacity="0.50"/><circle cx="32.0" cy="67.4" r="0.6" fill="#4a6a34" opacity="0.50"/><circle cx="36.8" cy="69.0" r="0.6" fill="#4a6a34" opacity="0.50"/><circle cx="41.5" cy="70.5" r="0.6" fill="#7a3020" opacity="0.50"/><circle cx="46.1" cy="72.0" r="0.6" fill="#4a6a34" opacity="0.50"/><circle cx="50.6" cy="73.5" r="0.6" fill="#4a6a34" opacity="0.50"/><circle cx="55.0" cy="74.9" r="0.6" fill="#7a3020" opacity="0.50"/><circle cx="59.3" cy="76.3" r="0.6" fill="#5a4a26" opacity="0.50"/><circle cx="63.5" cy="77.6" r="0.6" fill="#5a4a26" opacity="0.50"/><circle cx="67.6" cy="79.0" r="0.6" fill="#7a3020" opacity="0.50"/><circle cx="71.6" cy="80.3" r="0.6" fill="#4a6a34" opacity="0.50"/><circle cx="75.4" cy="81.5" r="0.6" fill="#7a3020" opacity="0.50"/><circle cx="79.1" cy="82.7" r="0.6" fill="#4a6a34" opacity="0.50"/><circle cx="82.7" cy="83.9" r="0.6" fill="#7a3020" opacity="0.50"/><circle cx="86.2" cy="85.0" r="0.6" fill="#5a4a26" opacity="0.50"/><circle cx="89.5" cy="86.1" r="0.6" fill="#5a4a26" opacity="0.50"/><circle cx="92.7" cy="87.1" r="0.6" fill="#5a4a26" opacity="0.50"/><circle cx="95.8" cy="88.1" r="0.6" fill="#7a3020" opacity="0.50"/><circle cx="0.5" cy="63.6" r="0.6" fill="#4a6a34" opacity="0.50"/><circle cx="5.8" cy="65.3" r="0.6" fill="#7a3020" opacity="0.50"/><circle cx="11.0" cy="67.0" r="0.6" fill="#7a3020" opacity="0.50"/><circle cx="16.2" cy="68.7" r="0.6" fill="#4a6a34" opacity="0.50"/><circle cx="21.3" cy="70.3" r="0.6" fill="#4a6a34" opacity="0.50"/><circle cx="26.3" cy="72.0" r="0.6" fill="#4a6a34" opacity="0.50"/><circle cx="31.2" cy="73.6" r="0.6" fill="#4a6a34" opacity="0.50"/><circle cx="36.1" cy="75.1" r="0.6" fill="#4a6a34" opacity="0.50"/><circle cx="40.8" cy="76.7" r="0.6" fill="#4a6a34" opacity="0.50"/><circle cx="45.5" cy="78.2" r="0.6" fill="#4a6a34" opacity="0.50"/><circle cx="50.0" cy="79.7" r="0.6" fill="#7a3020" opacity="0.50"/><circle cx="54.5" cy="81.1" r="0.6" fill="#4a6a34" opacity="0.50"/><circle cx="58.8" cy="82.5" r="0.6" fill="#5a4a26" opacity="0.50"/><circle cx="63.0" cy="83.9" r="0.6" fill="#4a6a34" opacity="0.50"/><circle cx="67.1" cy="85.2" r="0.6" fill="#5a4a26" opacity="0.50"/><circle cx="71.1" cy="86.5" r="0.6" fill="#5a4a26" opacity="0.50"/><circle cx="75.0" cy="87.8" r="0.6" fill="#7a3020" opacity="0.50"/><circle cx="4.6" cy="71.4" r="0.6" fill="#7a3020" opacity="0.50"/><circle cx="9.9" cy="73.1" r="0.6" fill="#4a6a34" opacity="0.50"/><circle cx="15.1" cy="74.8" r="0.6" fill="#7a3020" opacity="0.50"/><circle cx="20.3" cy="76.5" r="0.6" fill="#4a6a34" opacity="0.50"/><circle cx="25.3" cy="78.1" r="0.6" fill="#7a3020" opacity="0.50"/><circle cx="30.3" cy="79.8" r="0.6" fill="#7a3020" opacity="0.50"/><circle cx="35.2" cy="81.3" r="0.6" fill="#5a4a26" opacity="0.50"/><circle cx="40.0" cy="82.9" r="0.6" fill="#7a3020" opacity="0.50"/><circle cx="44.7" cy="84.4" r="0.6" fill="#5a4a26" opacity="0.50"/><circle cx="49.3" cy="85.9" r="0.6" fill="#7a3020" opacity="0.50"/><circle cx="53.7" cy="87.4" r="0.6" fill="#7a3020" opacity="0.50"/><circle cx="58.1" cy="88.8" r="0.6" fill="#7a3020" opacity="0.50"/><circle cx="3.4" cy="77.6" r="0.6" fill="#4a6a34" opacity="0.50"/><circle cx="8.8" cy="79.3" r="0.6" fill="#7a3020" opacity="0.50"/><circle cx="14.0" cy="81.0" r="0.6" fill="#7a3020" opacity="0.50"/><circle cx="19.2" cy="82.7" r="0.6" fill="#4a6a34" opacity="0.50"/><circle cx="24.3" cy="84.3" r="0.6" fill="#4a6a34" opacity="0.50"/><circle cx="29.3" cy="86.0" r="0.6" fill="#5a4a26" opacity="0.50"/><circle cx="34.2" cy="87.6" r="0.6" fill="#4a6a34" opacity="0.50"/><circle cx="2.1" cy="83.7" r="0.6" fill="#5a4a26" opacity="0.50"/><circle cx="7.5" cy="85.5" r="0.6" fill="#5a4a26" opacity="0.50"/><circle cx="12.8" cy="87.2" r="0.6" fill="#7a3020" opacity="0.50"/><circle cx="18.0" cy="88.9" r="0.6" fill="#4a6a34" opacity="0.50"/><path d="M101 0Q113 22 118.4 46T125.3 89" fill="none" stroke="#7a2030" stroke-width="0.8" opacity="0.6"/><text x="12" y="52" font-family="Liberation Serif" font-size="21" fill="#e8403a" letter-spacing="0.6">AiPPT</text><rect x="12" y="53.2" width="59" height="1.4" fill="#d83a30"/><rect x="10" y="58" width="22" height="1.6" fill="url(#rb)"/><path d="M148 0H158V10z M0 79V89H10z" fill="#fff"/><path d="M141 0L158 17M0 71L18 89" stroke="#d8d8d8" stroke-width="1"/></svg>

<div class="a" style="left:24.5px;top:251px;width:160px;height:91px;border-radius:4px;background:#dedede"></div>
<svg class="a" style="left:25.5px;top:252px;border-radius:3px" width="158" height="89" viewBox="0 0 158 89"><defs><linearGradient id="rb"><stop offset="0" stop-color="#e8372c"/><stop offset="1" stop-color="#e8372c" stop-opacity="0.1"/></linearGradient></defs><rect width="158" height="89" fill="#050505"/><rect x="10.5" y="12" width="23.5" height="2" fill="url(#rb)"/><text x="10.5" y="18.5" font-family="Liberation Sans" font-size="3.2" fill="#ececec" opacity="0.95" textLength="136.5" lengthAdjust="spacingAndGlyphs">Lorem ipsum dolor sit amet, consectetur adipiscing elit. Maecenas porttitor congue ma</text><text x="10.5" y="26" font-family="Liberation Sans" font-size="3.2" fill="#ececec" opacity="0.95" textLength="125.5" lengthAdjust="spacingAndGlyphs">ur adipiscing elit. Maecenas porttitor congue massa. Fusce posuere, magna sed </text><text x="10.5" y="31" font-family="Liberation Sans" font-size="3.2" fill="#ececec" opacity="0.95" textLength="91.5" lengthAdjust="spacingAndGlyphs">r congue massa. Fusce posuere, magna sed pulvinar ultrici</text><text x="10.5" y="39" font-family="Liberation Sans" font-size="3.2" fill="#ececec" opacity="0.95" textLength="126.5" lengthAdjust="spacingAndGlyphs">sed pulvinar ultricies, purus lectus malesuada libero, sit amet commodo magna e</text><text x="10.5" y="44" font-family="Liberation Sans" font-size="3.2" fill="#ececec" opacity="0.95" textLength="52.5" lengthAdjust="spacingAndGlyphs">malesuada libero, sit amet commo</text><text x="10.5" y="52" font-family="Liberation Sans" font-size="3.2" fill="#ececec" opacity="0.95" textLength="46.5" lengthAdjust="spacingAndGlyphs">gna eros quis urna. Nunc vive</text><text x="10.5" y="59.5" font-family="Liberation Sans" font-size="3.2" fill="#ececec" opacity="0.95" textLength="49.5" lengthAdjust="spacingAndGlyphs">rdiet enim. Fusce est. Vivamus</text><text x="10.5" y="67" font-family="Liberation Sans" font-size="3.2" fill="#ececec" opacity="0.95" textLength="64.5" lengthAdjust="spacingAndGlyphs">us. Pellentesque habitant morbi tristiqu</text><rect x="143.5" y="6.5" width="9" height="9" fill="#ddd"/><circle cx="148" cy="11" r="3.8" fill="none" stroke="#777" stroke-width="0.5"/><path d="M145.5 11h5" stroke="#5a4a8a" stroke-width="1"/><path d="M130 68.5h1.5l2-1.8v5.6l-2-1.8h-1.5z" fill="#ccc"/><path d="M134.5 68c.8.8.8 3.2 0 4" stroke="#ccc" stroke-width="0.5" fill="none"/><path d="M148 0H158V10z M0 79V89H10z" fill="#fff"/><path d="M141 0L158 17M0 71L18 89" stroke="#d8d8d8" stroke-width="1"/></svg>

<div class="a" style="left:24.5px;top:361px;width:160px;height:91px;border-radius:4px;background:#dedede"></div>
<svg class="a" style="left:25.5px;top:362px;border-radius:3px" width="158" height="89" viewBox="0 0 158 89"><defs><linearGradient id="rb"><stop offset="0" stop-color="#e8372c"/><stop offset="1" stop-color="#e8372c" stop-opacity="0.1"/></linearGradient></defs><rect width="158" height="89" fill="#050505"/><linearGradient id="pg" x1="0" y1="0" x2="0" y2="1"><stop offset="0" stop-color="#0c0c48"/><stop offset="0.55" stop-color="#200a3a"/><stop offset="0.75" stop-color="#1a0828"/><stop offset="1" stop-color="#050505"/></linearGradient><rect x="58.6" y="32.6" width="99.4" height="52" fill="url(#pg)"/><clipPath id="c3"><rect x="58.6" y="32.6" width="99.4" height="52"/></clipPath><g clip-path="url(#c3)"><path d="M100 64.2 L108 37 L116 64.2" fill="none" stroke="#8a3ad0" stroke-width="0.7" opacity="0.9"/><path d="M100 64.2 L103.6 82 M116 64.2 L112.4 82" fill="none" stroke="#8a3ad0" stroke-width="0.5599999999999999" opacity="0.35"/><path d="M94 64.2 L108 34 L122 64.2" fill="none" stroke="#6a4ae8" stroke-width="0.8" opacity="0.9"/><path d="M94 64.2 L100.3 82 M122 64.2 L115.7 82" fill="none" stroke="#6a4ae8" stroke-width="0.6400000000000001" opacity="0.35"/><path d="M88 64.2 L108 30 L128 64.2" fill="none" stroke="#b044d8" stroke-width="0.9" opacity="0.9"/><path d="M88 64.2 L97.0 82 M128 64.2 L119.0 82" fill="none" stroke="#b044d8" stroke-width="0.7200000000000001" opacity="0.35"/><path d="M81 64.2 L108 26 L135 64.2" fill="none" stroke="#5a58f0" stroke-width="0.8" opacity="0.9"/><path d="M81 64.2 L93.15 82 M135 64.2 L122.85 82" fill="none" stroke="#5a58f0" stroke-width="0.6400000000000001" opacity="0.35"/><path d="M72 64.2 L108 20 L144 64.2" fill="none" stroke="#a040e0" stroke-width="1.0" opacity="0.9"/><path d="M72 64.2 L88.2 82 M144 64.2 L127.8 82" fill="none" stroke="#a040e0" stroke-width="0.8" opacity="0.35"/><path d="M62 64.2 L108 12 L154 64.2" fill="none" stroke="#6a5af8" stroke-width="1.0" opacity="0.9"/><path d="M62 64.2 L82.7 82 M154 64.2 L133.3 82" fill="none" stroke="#6a5af8" stroke-width="0.8" opacity="0.35"/></g><rect x="58.6" y="64" width="99.4" height="0.6" fill="#8a5ad0" opacity="0.6"/><rect x="72.8" y="60.1" width="69.8" height="5.6" rx="0.8" fill="#050505"/><text x="99.3" y="59" font-family="Liberation Sans" font-weight="bold" font-size="4.6" fill="#eee">Ai PPT</text><text x="68.5" y="29.6" font-family="Liberation Sans" font-size="17.5" fill="#4a4a4a" textLength="43" lengthAdjust="spacingAndGlyphs">AiPPT</text><path d="M75.9 0H86V10.5z" fill="#fff"/><path d="M68.8 0L85 16.3" stroke="#d8d8d8" stroke-width="1"/><circle cx="3.5" cy="5" r="0.55" fill="#e33"/><circle cx="3.5" cy="12.3" r="0.55" fill="#e33"/><circle cx="3.5" cy="17.5" r="0.55" fill="#e33"/><circle cx="3.5" cy="24.5" r="0.55" fill="#e33"/><circle cx="3.5" cy="31" r="0.55" fill="#e33"/><circle cx="3.5" cy="43.5" r="0.55" fill="#e33"/><text x="6" y="5.7" font-family="Liberation Sans" font-size="3" fill="#ececec" opacity="0.85" textLength="40" lengthAdjust="spacingAndGlyphs">Lorem ipsum dolor sit amet</text><text x="6" y="10.2" font-family="Liberation Sans" font-size="3" fill="#ececec" opacity="0.85" textLength="39" lengthAdjust="spacingAndGlyphs">met, consectetur adipiscin</text><text x="6" y="18.2" font-family="Liberation Sans" font-size="3" fill="#ececec" opacity="0.85" textLength="49" lengthAdjust="spacingAndGlyphs">cing elit. Maecenas porttitor co</text><text x="6" y="25.2" font-family="Liberation Sans" font-size="3" fill="#ececec" opacity="0.85" textLength="37" lengthAdjust="spacingAndGlyphs">ttitor congue massa. Fus</text><text x="6" y="31.7" font-family="Liberation Sans" font-size="3" fill="#ececec" opacity="0.85" textLength="52" lengthAdjust="spacingAndGlyphs">sce posuere, magna sed pulvinar ul</text><text x="6" y="36.2" font-family="Liberation Sans" font-size="3" fill="#ececec" opacity="0.85" textLength="51" lengthAdjust="spacingAndGlyphs">pulvinar ultricies, purus lectus m</text><text x="6" y="40.2" font-family="Liberation Sans" font-size="3" fill="#ececec" opacity="0.85" textLength="24" lengthAdjust="spacingAndGlyphs">us lectus malesu</text><text x="6" y="49.2" font-family="Liberation Sans" font-size="3" fill="#ececec" opacity="0.85" textLength="45" lengthAdjust="spacingAndGlyphs">ero, sit amet commodo magna er</text><rect x="10" y="12.5" width="23" height="2" fill="url(#rb)"/><rect x="143.5" y="6.5" width="9" height="9" fill="#ddd"/><circle cx="148" cy="11" r="3.8" fill="none" stroke="#777" stroke-width="0.5"/><path d="M145.5 11h5" stroke="#5a4a8a" stroke-width="1"/><path d="M0 79V89H10z" fill="#fff"/><path d="M0 71L18 89" stroke="#d8d8d8" stroke-width="1"/></svg>

<div class="a" style="left:24.5px;top:471px;width:160px;height:91px;border-radius:4px;background:#dedede"></div>
<svg class="a" style="left:25.5px;top:472px;border-radius:3px" width="158" height="89" viewBox="0 0 158 89"><defs><linearGradient id="rb"><stop offset="0" stop-color="#e8372c"/><stop offset="1" stop-color="#e8372c" stop-opacity="0.1"/></linearGradient></defs><rect width="158" height="89" fill="#fff"/><clipPath id="c4"><path d="M0 0H118C135 5 143 15 150 27L60 80C40 62 20 48 0 35z"/></clipPath><g clip-path="url(#c4)"><rect width="158" height="89" fill="#c10d10"/><path d="M-5 -4.0 C 40 -2.0, 90 1.4, 150 17.6" stroke="#a00a0c" stroke-width="3.1" fill="none"/><path d="M-5 -1.4 C 40 0.6, 90 2.4, 150 17.9" stroke="#f0282a" stroke-width="2.5" fill="none"/><path d="M-5 1.2 C 40 3.2, 90 3.5, 150 18.1" stroke="#c80e12" stroke-width="2.8" fill="none"/><path d="M-5 3.8 C 40 5.8, 90 4.5, 150 18.4" stroke="#c80e12" stroke-width="1.9" fill="none"/><path d="M-5 6.4 C 40 8.4, 90 5.6, 150 18.6" stroke="#c80e12" stroke-width="3.0" fill="none"/><path d="M-5 9.0 C 40 11.0, 90 6.6, 150 18.9" stroke="#e0161a" stroke-width="1.3" fill="none"/><path d="M-5 11.6 C 40 13.6, 90 7.6, 150 19.2" stroke="#f0282a" stroke-width="2.0" fill="none"/><path d="M-5 14.2 C 40 16.2, 90 8.7, 150 19.4" stroke="#e0161a" stroke-width="1.4" fill="none"/><path d="M-5 16.8 C 40 18.8, 90 9.7, 150 19.7" stroke="#f0282a" stroke-width="1.3" fill="none"/><path d="M-5 19.4 C 40 21.4, 90 10.8, 150 19.9" stroke="#b80c10" stroke-width="1.4" fill="none"/><path d="M-5 22.0 C 40 24.0, 90 11.8, 150 20.2" stroke="#e0161a" stroke-width="2.5" fill="none"/><path d="M-5 24.6 C 40 26.6, 90 12.8, 150 20.5" stroke="#b80c10" stroke-width="3.1" fill="none"/><path d="M-5 27.2 C 40 29.2, 90 13.9, 150 20.7" stroke="#b80c10" stroke-width="2.4" fill="none"/><path d="M-5 29.8 C 40 31.8, 90 14.9, 150 21.0" stroke="#c80e12" stroke-width="3.2" fill="none"/><path d="M-5 32.4 C 40 34.4, 90 16.0, 150 21.2" stroke="#c80e12" stroke-width="2.3" fill="none"/><path d="M-5 35.0 C 40 37.0, 90 17.0, 150 21.5" stroke="#e0161a" stroke-width="1.8" fill="none"/><path d="M-5 37.6 C 40 39.6, 90 18.0, 150 21.8" stroke="#e0161a" stroke-width="2.3" fill="none"/><path d="M-5 40.2 C 40 42.2, 90 19.1, 150 22.0" stroke="#b80c10" stroke-width="1.8" fill="none"/><path d="M-5 42.8 C 40 44.8, 90 20.1, 150 22.3" stroke="#8a0608" stroke-width="1.6" fill="none"/><path d="M-5 45.4 C 40 47.4, 90 21.2, 150 22.5" stroke="#b80c10" stroke-width="2.3" fill="none"/><path d="M-5 48.0 C 40 50.0, 90 22.2, 150 22.8" stroke="#e0161a" stroke-width="1.9" fill="none"/><path d="M-5 50.6 C 40 52.6, 90 23.2, 150 23.1" stroke="#b80c10" stroke-width="2.6" fill="none"/><path d="M-5 53.2 C 40 55.2, 90 24.3, 150 23.3" stroke="#b80c10" stroke-width="1.3" fill="none"/><path d="M-5 55.8 C 40 57.8, 90 25.3, 150 23.6" stroke="#e0161a" stroke-width="2.2" fill="none"/><path d="M-5 58.4 C 40 60.4, 90 26.4, 150 23.8" stroke="#b80c10" stroke-width="2.1" fill="none"/><path d="M-5 61.0 C 40 63.0, 90 27.4, 150 24.1" stroke="#a00a0c" stroke-width="2.1" fill="none"/><path d="M-5 20.0 C 20 28.0, 40 45.0, 62 60.0" stroke="#d01014" stroke-width="2.0" fill="none"/><path d="M-5 23.5 C 20 31.5, 40 48.5, 62 63.5" stroke="#e0161a" stroke-width="2.7" fill="none"/><path d="M-5 27.0 C 20 35.0, 40 52.0, 62 67.0" stroke="#e0161a" stroke-width="1.6" fill="none"/><path d="M-5 30.5 C 20 38.5, 40 55.5, 62 70.5" stroke="#a00a0c" stroke-width="2.3" fill="none"/><path d="M-5 34.0 C 20 42.0, 40 59.0, 62 74.0" stroke="#a00a0c" stroke-width="2.6" fill="none"/><path d="M-5 37.5 C 20 45.5, 40 62.5, 62 77.5" stroke="#a00a0c" stroke-width="2.4" fill="none"/><path d="M-5 41.0 C 20 49.0, 40 66.0, 62 81.0" stroke="#c80e12" stroke-width="1.7" fill="none"/><path d="M-5 44.5 C 20 52.5, 40 69.5, 62 84.5" stroke="#d01014" stroke-width="1.7" fill="none"/><path d="M-5 48.0 C 20 56.0, 40 73.0, 62 88.0" stroke="#a00a0c" stroke-width="1.7" fill="none"/><path d="M-5 51.5 C 20 59.5, 40 76.5, 62 91.5" stroke="#d01014" stroke-width="2.1" fill="none"/><path d="M-5 55.0 C 20 63.0, 40 80.0, 62 95.0" stroke="#c80e12" stroke-width="2.6" fill="none"/><path d="M-5 58.5 C 20 66.5, 40 83.5, 62 98.5" stroke="#a00a0c" stroke-width="2.0" fill="none"/><path d="M5 33C15 38 22 42 30 47M50 50C57 56 60 62 62 66M38 22C55 30 70 38 80 45M108 6C112 9 116 12 118 15M125 8C128 11 131 14 133 17" stroke="#fff" stroke-width="1.3" fill="none" opacity="0.9"/><path d="M0 8C40 6 90 5 150 20M0 20C40 24 80 30 120 40" stroke="#5a0004" stroke-width="1.5" fill="none" opacity="0.6"/></g><path d="M57.5 25.6H141.6L158 35.5V89H67L57.5 71z" fill="#050505"/><path d="M141.6 25.6L158 42M57.5 65L67 89" stroke="#bdbdbd" stroke-width="0.9"/><text x="69.5" y="39.5" font-family="Liberation Sans" font-size="4" fill="#ddd" font-weight="bold">TITLE SLIDE 4</text><rect x="69" y="41.8" width="23" height="2" fill="url(#rb)"/><circle cx="70" cy="49.5" r="0.5" fill="#e33"/><circle cx="70" cy="61" r="0.5" fill="#e33"/><circle cx="70" cy="68" r="0.5" fill="#e33"/><text x="72" y="50.2" font-family="Liberation Sans" font-size="3" fill="#ececec" opacity="0.85" textLength="59" lengthAdjust="spacingAndGlyphs">Lorem ipsum dolor sit amet, consectetur</text><text x="72" y="54.2" font-family="Liberation Sans" font-size="3" fill="#ececec" opacity="0.85" textLength="21" lengthAdjust="spacingAndGlyphs">sectetur adipi</text><text x="72" y="61.7" font-family="Liberation Sans" font-size="3" fill="#ececec" opacity="0.85" textLength="48" lengthAdjust="spacingAndGlyphs">nas porttitor congue massa. Fusc</text><text x="72" y="68.7" font-family="Liberation Sans" font-size="3" fill="#ececec" opacity="0.85" textLength="73" lengthAdjust="spacingAndGlyphs">ce posuere, magna sed pulvinar ultricies, purus </text><text x="72" y="72.7" font-family="Liberation Sans" font-size="3" fill="#ececec" opacity="0.85" textLength="73" lengthAdjust="spacingAndGlyphs">ultricies, purus lectus malesuada libero, sit am</text><text x="72" y="77.2" font-family="Liberation Sans" font-size="3" fill="#ececec" opacity="0.85" textLength="21" lengthAdjust="spacingAndGlyphs">da libero, sit</text></svg>

<div class="a" style="left:24.5px;top:581px;width:160px;height:91px;border-radius:4px;background:#dedede"></div>
<svg class="a" style="left:25.5px;top:582px;border-radius:3px" width="158" height="89" viewBox="0 0 158 89"><defs><linearGradient id="rb"><stop offset="0" stop-color="#e8372c"/><stop offset="1" stop-color="#e8372c" stop-opacity="0.1"/></linearGradient></defs><rect width="158" height="89" fill="#050505"/><rect x="10.5" y="12" width="23.5" height="2" fill="url(#rb)"/><circle cx="13.6" cy="19" r="0.5" fill="#e33"/><circle cx="13.6" cy="30.5" r="0.5" fill="#e33"/><circle cx="13.6" cy="37.5" r="0.5" fill="#e33"/><text x="16" y="19.7" font-family="Liberation Sans" font-size="3" fill="#ececec" opacity="0.9" textLength="40" lengthAdjust="spacingAndGlyphs">Lorem ipsum dolor sit amet</text><text x="16" y="24.2" font-family="Liberation Sans" font-size="3" fill="#ececec" opacity="0.9" textLength="44" lengthAdjust="spacingAndGlyphs">onsectetur adipiscing elit. M</text><text x="16" y="31.2" font-family="Liberation Sans" font-size="3" fill="#ececec" opacity="0.9" textLength="48" lengthAdjust="spacingAndGlyphs">aecenas porttitor congue massa. </text><text x="16" y="38.2" font-family="Liberation Sans" font-size="3" fill="#ececec" opacity="0.9" textLength="46" lengthAdjust="spacingAndGlyphs">a. Fusce posuere, magna sed pu</text><text x="16" y="42.7" font-family="Liberation Sans" font-size="3" fill="#ececec" opacity="0.9" textLength="45" lengthAdjust="spacingAndGlyphs">ulvinar ultricies, purus lectu</text><text x="16" y="46.7" font-family="Liberation Sans" font-size="3" fill="#ececec" opacity="0.9" textLength="55" lengthAdjust="spacingAndGlyphs">us malesuada libero, sit amet commod</text><text x="16" y="51.2" font-family="Liberation Sans" font-size="3" fill="#ececec" opacity="0.9" textLength="14" lengthAdjust="spacingAndGlyphs"> commodo </text><path d="M108.2 37.4L108.20 22.80A14.6 14.6 0 1 1 100.25 49.64z" fill="#ec4034" stroke="#fff" stroke-width="0.5"/><path d="M108.2 37.4L100.25 49.64A14.6 14.6 0 0 1 94.48 32.41z" fill="#141414" stroke="#fff" stroke-width="0.5"/><path d="M108.2 37.4L94.48 32.41A14.6 14.6 0 0 1 102.26 24.06z" fill="#a8a8a8" stroke="#fff" stroke-width="0.5"/><path d="M108.2 37.4L102.26 24.06A14.6 14.6 0 0 1 108.20 22.80z" fill="#1e1e1e" stroke="#fff" stroke-width="0.5"/><rect x="101" y="21" width="8" height="1" fill="#555"/><rect x="88" y="55" width="1.3" height="1.3" fill="#ddd"/><rect x="90" y="55.2" width="5" height="0.8" fill="#444"/><rect x="98" y="55" width="1.3" height="1.3" fill="#ddd"/><rect x="100" y="55.2" width="5" height="0.8" fill="#444"/><rect x="108.5" y="55" width="1.3" height="1.3" fill="#ddd"/><rect x="110.5" y="55.2" width="5" height="0.8" fill="#444"/><rect x="119.5" y="55" width="1.3" height="1.3" fill="#ddd"/><rect x="121.5" y="55.2" width="5" height="0.8" fill="#444"/><path d="M39.5 67h14l2.5 8.7h-19z" fill="#5d6b4e"/><ellipse cx="46.4" cy="62" rx="11.5" ry="6.3" fill="#5d6b4e"/><circle cx="40.3" cy="56.6" r="3.2" fill="#111" stroke="#d8d8d8" stroke-width="0.8"/><circle cx="52.5" cy="56.6" r="3.2" fill="#111" stroke="#d8d8d8" stroke-width="0.8"/><ellipse cx="39" cy="63" rx="1.8" ry="1" fill="#a86a5a" opacity="0.6"/><ellipse cx="54" cy="63" rx="1.8" ry="1" fill="#a86a5a" opacity="0.6"/><path d="M39.5 75.7a6.9 4.2 0 0 1 13.8 0z" fill="#fff"/><path d="M140.5 74.5c3 0 5 1.2 5 3s-2 3-5 3" stroke="#d42a20" stroke-width="1.3" fill="none"/><rect x="143.5" y="6.5" width="9" height="9" fill="#ddd"/><circle cx="148" cy="11" r="3.8" fill="none" stroke="#777" stroke-width="0.5"/><path d="M145.5 11h5" stroke="#5a4a8a" stroke-width="1"/><path d="M148 0H158V10z M0 79V89H10z" fill="#fff"/><path d="M141 0L158 17M0 71L18 89" stroke="#d8d8d8" stroke-width="1"/></svg>

<div class="a" style="left:24.5px;top:691px;width:160px;height:91px;border-radius:4px;background:#dedede"></div>
<svg class="a" style="left:25.5px;top:692px;border-radius:3px" width="158" height="89" viewBox="0 0 158 89"><defs><linearGradient id="rb"><stop offset="0" stop-color="#e8372c"/><stop offset="1" stop-color="#e8372c" stop-opacity="0.1"/></linearGradient></defs><rect width="158" height="89" fill="#050505"/><text x="11.5" y="8" font-family="Liberation Sans" font-size="4" fill="#ddd" font-weight="bold">TITLE SLIDE 4</text><rect x="10.5" y="12" width="23.5" height="2" fill="url(#rb)"/><rect x="14.2" y="20.0" width="132.4" height="0.5" fill="#3a3a3a"/><rect x="14.2" y="27.4" width="132.4" height="0.5" fill="#3a3a3a"/><rect x="14.2" y="34.8" width="132.4" height="0.5" fill="#3a3a3a"/><rect x="14.2" y="42.2" width="132.4" height="0.5" fill="#3a3a3a"/><rect x="14.2" y="49.6" width="132.4" height="0.5" fill="#3a3a3a"/><rect x="14.2" y="57.0" width="132.4" height="0.5" fill="#3a3a3a"/><rect x="14.2" y="63.8" width="132.4" height="0.6" fill="#ddd"/><rect x="21.6" y="32.4" width="6.0" height="31.4" fill="#ec4034"/><rect x="28.7" y="46.6" width="5.9" height="17.2" fill="#fafafa"/><rect x="36.2" y="49.5" width="5.6" height="14.3" fill="#a6a6a6"/><rect x="54" y="45.4" width="5.7" height="18.4" fill="#ec4034"/><rect x="61.6" y="31.5" width="5.8" height="32.3" fill="#fafafa"/><rect x="68.7" y="49.5" width="5.3" height="14.3" fill="#a6a6a6"/><rect x="87" y="38.6" width="5.8" height="25.2" fill="#ec4034"/><rect x="94.4" y="50.3" width="5.4" height="13.5" fill="#fafafa"/><rect x="101.7" y="42.3" width="5.9" height="21.5" fill="#a6a6a6"/><rect x="119.7" y="30.9" width="5.9" height="32.9" fill="#ec4034"/><rect x="127.2" y="43.5" width="5.5" height="20.3" fill="#fafafa"/><rect x="134.2" y="27.5" width="5.6" height="36.3" fill="#a6a6a6"/><rect x="29.0" y="66.8" width="5" height="1" fill="#bbb"/><rect x="61.8" y="66.8" width="5" height="1" fill="#bbb"/><rect x="94.6" y="66.8" width="5" height="1" fill="#bbb"/><rect x="127.1" y="66.8" width="5" height="1" fill="#bbb"/><rect x="65.5" y="72.5" width="1.3" height="1.3" fill="#ec4034"/><rect x="67.5" y="72.7" width="4" height="0.8" fill="#777"/><rect x="76" y="72.5" width="1.3" height="1.3" fill="#fafafa"/><rect x="78" y="72.7" width="4" height="0.8" fill="#777"/><rect x="86.5" y="72.5" width="1.3" height="1.3" fill="#a6a6a6"/><rect x="88.5" y="72.7" width="4" height="0.8" fill="#777"/><rect x="143.5" y="6.5" width="9" height="9" fill="#ddd"/><circle cx="148" cy="11" r="3.8" fill="none" stroke="#777" stroke-width="0.5"/><path d="M145.5 11h5" stroke="#5a4a8a" stroke-width="1"/><path d="M148 0H158V10z M0 79V89H10z" fill="#fff"/><path d="M141 0L158 17M0 71L18 89" stroke="#d8d8d8" stroke-width="1"/></svg>

<div class="a" style="left:23px;top:798px;width:164px;height:96px;border:3px solid #7d1a1e;border-radius:6px"></div>
<div class="a" style="left:25.5px;top:800.5px;width:159px;height:90px;border:1px solid #e8e8e8;border-radius:3px"></div>
<svg class="a" style="left:25.5px;top:801px;border-radius:3px" width="158" height="89" viewBox="0 0 158 89"><rect width="158" height="89" fill="#050505"/><g transform="scale(0.1274)"><g fill="#f2aeae"><path d="M446.5 332.8h22.5v-10.4l24.2 26.5-24.2 27v-10.3h-22.5z"/><path d="M750.8 332.8h22.4v-10.4l23.6 26.5-23.6 27v-10.3h-22.4z"/></g><g fill="#ee4237" stroke="#f3d0cc" stroke-width="5"><rect x="207.6" y="282.6" width="217" height="131.5" rx="12"/><rect x="511.4" y="282.6" width="217.5" height="131.5" rx="12"/><rect x="815.2" y="282.6" width="217.5" height="131.5" rx="12"/></g><g fill="#fff" font-family="Liberation Sans" font-size="61" text-anchor="middle"><text x="316" y="370">1</text><text x="620" y="370">2</text><text x="924" y="370">3</text></g></g><rect x="143.5" y="6.5" width="9" height="9" fill="#ddd"/><circle cx="148" cy="11" r="3.8" fill="none" stroke="#777" stroke-width="0.5"/><path d="M145.5 11h5" stroke="#5a4a8a" stroke-width="1"/></svg>

<svg class="a" style="left:1px;top:264px" width="11" height="9" viewBox="0 0 11 9"><path d="M6.5 0.3l1.1 2.7 2.9.2-2.2 1.9.7 2.8-2.5-1.5-2.5 1.5.7-2.8-2.2-1.9 2.9-.2z" fill="#555"/><path d="M0.5 1.5h2M0.5 4h1.5M0.5 6.5h1.5" stroke="#777" stroke-width="0.8"/></svg>
<svg class="a" style="left:1px;top:374px" width="11" height="9" viewBox="0 0 11 9"><path d="M6.5 0.3l1.1 2.7 2.9.2-2.2 1.9.7 2.8-2.5-1.5-2.5 1.5.7-2.8-2.2-1.9 2.9-.2z" fill="#555"/><path d="M0.5 1.5h2M0.5 4h1.5M0.5 6.5h1.5" stroke="#777" stroke-width="0.8"/></svg>
<!-- status bar text -->
<div class="a" style="left:3px;top:925px;font-size:10.5px;color:#555;white-space:nowrap;line-height:13px;transform:scaleX(0.91);transform-origin:0 0">Slide 7 of 7</div>
<svg class="a" style="left:72px;top:924px" width="14" height="9" viewBox="0 0 14 9"><path d="M1.5 9V1.5h4.5c.5 0 1 .5 1 1V9M7 2.5c0-.5.5-1 1-1h4.5V9" fill="none" stroke="#555" stroke-width="1.1"/></svg>
<div class="a" style="left:102px;top:925px;font-size:10.5px;color:#555;white-space:nowrap;line-height:13px;transform:scaleX(0.91);transform-origin:0 0">Chinese (Simplified, Mainland China)</div>
<svg class="a" style="left:274px;top:922px" width="14" height="11" viewBox="0 0 14 11"><circle cx="7" cy="3" r="1.8" fill="none" stroke="#555" stroke-width="1"/><path d="M2 5.5h10M7 5v6M4 11l3-5 3 5" fill="none" stroke="#555" stroke-width="1"/></svg>
<div class="a" style="left:292px;top:925px;font-size:10.5px;color:#555;white-space:nowrap;line-height:13px;transform:scaleX(0.91);transform-origin:0 0">Accessibility: Investigate</div>
<svg class="a" style="left:1210px;top:922px" width="16" height="11" viewBox="0 0 16 11"><path d="M1 8.5h14M5.5 5l2.5-2.5 2.5 2.5" fill="none" stroke="#555" stroke-width="1.1"/></svg>
<div class="a" style="left:1227px;top:925px;font-size:10.5px;color:#555;white-space:nowrap;line-height:13px;transform:scaleX(0.91);transform-origin:0 0">Notes</div>
<svg class="a" style="left:1266px;top:922px" width="16" height="11" viewBox="0 0 16 11"><rect x="2" y="3" width="11" height="9" fill="none" stroke="#555" stroke-width="1.1"/><rect x="8" y="6" width="3" height="2" fill="#555"/></svg>
<div class="a" style="left:1284px;top:925px;font-size:10.5px;color:#555;white-space:nowrap;line-height:13px;transform:scaleX(0.91);transform-origin:0 0">Display Settings</div>
<svg class="a" style="left:1369px;top:922px" width="16" height="11" viewBox="0 0 16 11"><rect x="2.5" y="3" width="11" height="9" rx="1" fill="none" stroke="#555" stroke-width="1.1"/></svg>
<div class="a" style="left:1387px;top:925px;font-size:10.5px;color:#555;white-space:nowrap;line-height:13px;transform:scaleX(0.91);transform-origin:0 0">Comments</div>
<div class="a" style="left:1452px;top:922px;width:37px;height:11px;background:#dcdcdc"></div>
<svg class="a" style="left:1460px;top:924px" width="20" height="9" viewBox="0 0 20 9"><rect x="4" y="1" width="12" height="9" fill="none" stroke="#444" stroke-width="1.1"/><path d="M6 1v8" stroke="#444" stroke-width="1"/><rect x="8" y="3" width="5" height="2.5" fill="none" stroke="#444" stroke-width="1"/></svg>
<svg class="a" style="left:1498px;top:924px" width="20" height="9" viewBox="0 0 20 9"><rect x="2" y="1" width="6" height="5" fill="none" stroke="#444" stroke-width="1.1"/><rect x="10" y="1" width="6" height="5" fill="none" stroke="#444" stroke-width="1.1"/></svg>
<!-- scrollbar nav arrows right -->
<svg class="a" style="left:1507px;top:794px" width="14" height="32" viewBox="0 0 14 32"><path d="M7 1.5l4.5 5h-9z M7 6.5l4.5 5h-9z M2.5 18.5h9l-4.5 5z M2.5 23.5h9l-4.5 5z" fill="#707070"/></svg>
<!-- right side panel fragments -->
<div class="a" style="left:1533px;top:138px;width:3px;height:15px;background:#3a4a7a;border-left:1px solid #c08a3a"></div>
<div class="a" style="left:1523px;top:159px;width:13px;height:1px;background:#e6e6e6"></div>
<div class="a" style="left:1535px;top:167px;width:1px;height:27px;background:#aaa"></div>
<div class="a" style="left:1532px;top:208px;width:4px;height:1px;background:#aaa"></div>
<div class="a" style="left:1532px;top:886px;width:6px;height:22px;background:#fff;border:1px solid #ddd;border-right:none;border-radius:4px 0 0 4px"></div>
<!-- red annotation -->
<div class="a" style="left:0;top:33px;width:65px;height:91px;border:4.5px solid #ff1a10;border-radius:6px"></div>
<svg class="a" style="left:0;top:0" width="1536" height="933" viewBox="0 0 1536 933">
<defs><linearGradient id="lg" gradientUnits="userSpaceOnUse" x1="126" y1="106" x2="1092" y2="564"><stop offset="0" stop-color="#ff1e12"/><stop offset="0.88" stop-color="#ff1e12"/><stop offset="1" stop-color="#7a0806" stop-opacity="0.5"/></linearGradient></defs>
<path d="M126.4 106.1L145.2 104L140.5 108.5L1092.3 563.6L1091.7 564.9L137.3 115.1L137.3 121.1z" fill="url(#lg)"/>
</svg>

</body></html>
